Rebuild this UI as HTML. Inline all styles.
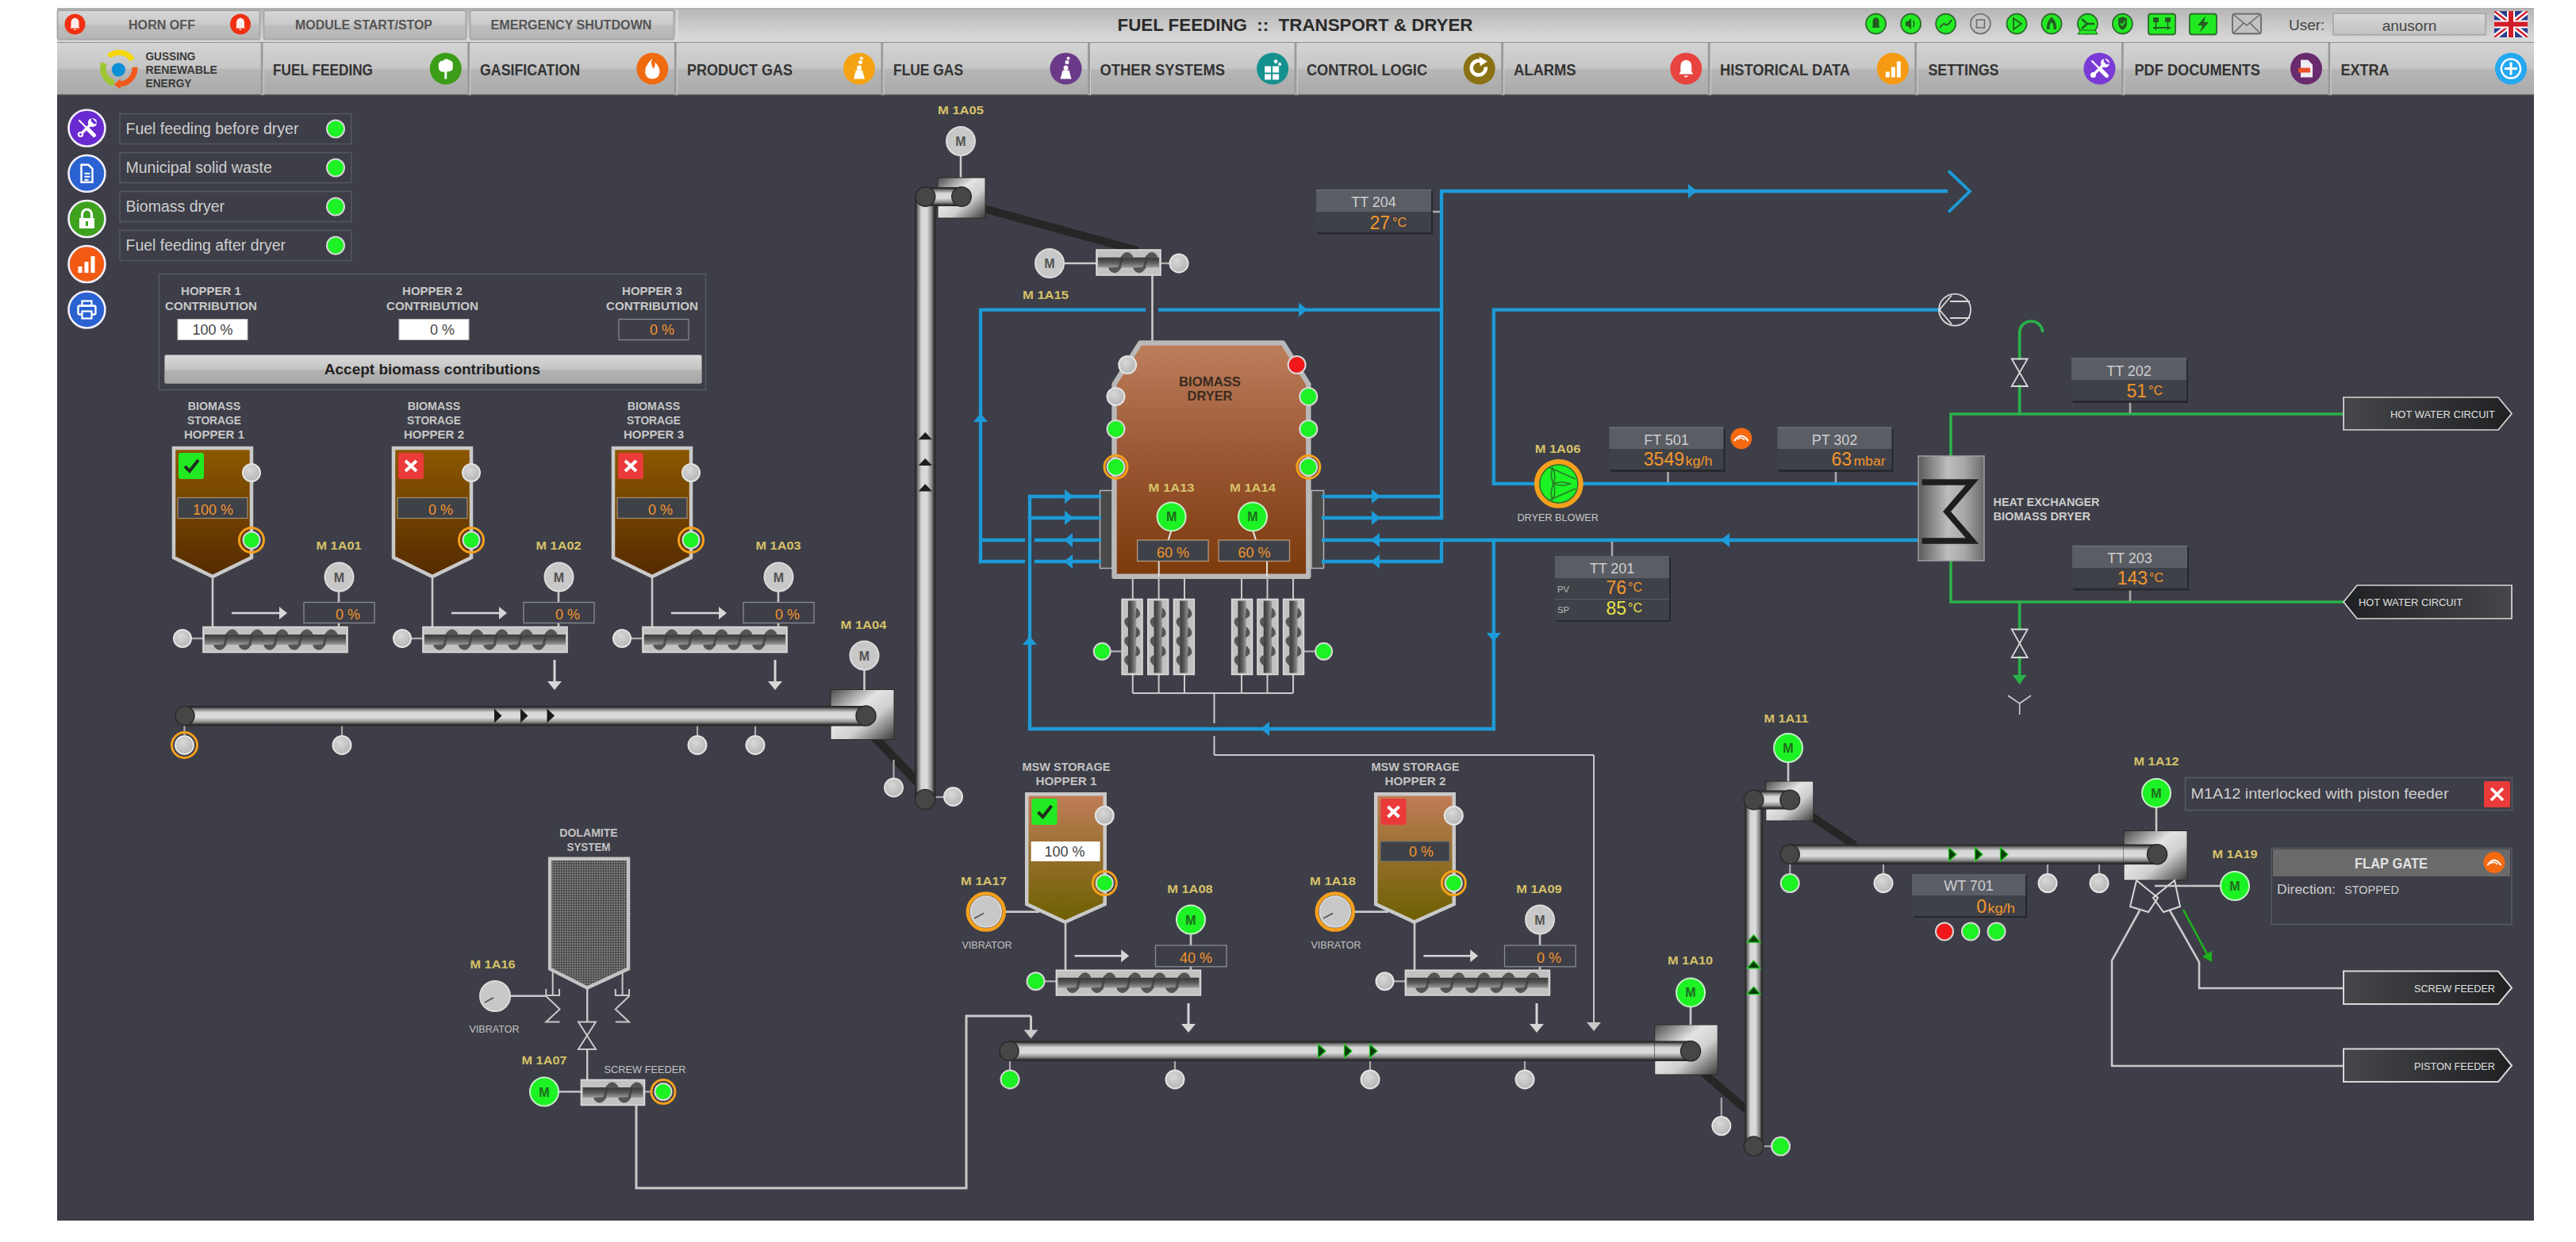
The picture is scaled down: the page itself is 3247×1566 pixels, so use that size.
<!DOCTYPE html>
<html><head><meta charset="utf-8"><style>
html,body{margin:0;padding:0;background:#fff;width:3247px;height:1566px;overflow:hidden}
svg{display:block;font-family:"Liberation Sans", sans-serif}
#wrap{}
</style></head><body><div id="wrap">
<svg width="3247" height="1566" viewBox="0 0 3247 1566">
<defs>
<linearGradient id="topbar" x1="0" y1="0" x2="0" y2="1">
 <stop offset="0" stop-color="#d9d9d9"/><stop offset="0.5" stop-color="#cdcdcd"/><stop offset="1" stop-color="#c2c2c2"/>
</linearGradient>
<linearGradient id="topbar2" x1="0" y1="0" x2="0" y2="1">
 <stop offset="0" stop-color="#b6b6b6"/><stop offset="0.85" stop-color="#d6d6d6"/><stop offset="1" stop-color="#d8d8d8"/>
</linearGradient>
<linearGradient id="btnface" x1="0" y1="0" x2="0" y2="1">
 <stop offset="0" stop-color="#d6d6d6"/><stop offset="0.45" stop-color="#cbcbcb"/><stop offset="0.55" stop-color="#bdbdbd"/><stop offset="1" stop-color="#b6b6b6"/>
</linearGradient>
<linearGradient id="navbar" x1="0" y1="0" x2="0" y2="1">
 <stop offset="0" stop-color="#d4d4d4"/><stop offset="0.48" stop-color="#c6c6c6"/><stop offset="0.52" stop-color="#b6b6b6"/><stop offset="1" stop-color="#a9a9a9"/>
</linearGradient>
<radialGradient id="gdot" cx="0.4" cy="0.35" r="0.7">
 <stop offset="0" stop-color="#d8d8d8"/><stop offset="1" stop-color="#b4b4b4"/>
</radialGradient>
</defs>

<rect x="72" y="10" width="3122" height="1529" fill="#3d3e47" stroke="none" stroke-width="1" />
<rect x="72" y="10" width="3122" height="44" fill="url(#topbar2)" stroke="none" stroke-width="1" />
<rect x="72" y="10" width="3122" height="1.5" fill="#b0b0b0" stroke="none" stroke-width="1" />
<rect x="72" y="53" width="3122" height="2" fill="#8e8e8e" stroke="none" stroke-width="1" />
<rect x="72" y="54" width="3122" height="66" fill="url(#navbar)" stroke="none" stroke-width="1" />
<rect x="72" y="119" width="3122" height="1.5" fill="#55565c" stroke="none" stroke-width="1" />
<rect x="72.5" y="13" width="255" height="36.5" fill="url(#btnface)" stroke="#a6a6a6" stroke-width="1.8" rx="2"/>
<rect x="332.5" y="13" width="255" height="36.5" fill="url(#btnface)" stroke="#a6a6a6" stroke-width="1.8" rx="2"/>
<rect x="592.5" y="13" width="257" height="36.5" fill="url(#btnface)" stroke="#a6a6a6" stroke-width="1.8" rx="2"/>
<line x1="853.5" y1="12" x2="853.5" y2="50" stroke="#dcdcdc" stroke-width="2" />
<text x="162" y="36.5" font-size="16" fill="#555" text-anchor="start" font-weight="bold"  textLength="84" lengthAdjust="spacingAndGlyphs">HORN OFF</text>
<text x="372" y="36.5" font-size="16" fill="#555" text-anchor="start" font-weight="bold"  textLength="173" lengthAdjust="spacingAndGlyphs">MODULE START/STOP</text>
<text x="618.5" y="36.5" font-size="16" fill="#555" text-anchor="start" font-weight="bold"  textLength="203" lengthAdjust="spacingAndGlyphs">EMERGENCY SHUTDOWN</text>
<circle cx="94.5" cy="30.5" r="13" fill="#f03010"/>
<path transform="translate(94.5,30.5) scale(1.0)" d="M-6,5 L-5,3 L-5,-2 Q-5,-7 0,-8 Q5,-7 5,-2 L5,3 L6,5 Z M-2,6 Q0,9 2,6 Z" fill="#fff" opacity="0.92"/>
<circle cx="303" cy="30.5" r="13" fill="#f03010"/>
<path transform="translate(303,30.5) scale(1.0)" d="M-6,5 L-5,3 L-5,-2 Q-5,-7 0,-8 Q5,-7 5,-2 L5,3 L6,5 Z M-2,6 Q0,9 2,6 Z" fill="#fff" opacity="0.92"/>
<text x="1408.5" y="39" font-size="21.5" fill="#2a2a2a" text-anchor="start" font-weight="bold"  textLength="448" lengthAdjust="spacingAndGlyphs">FUEL FEEDING&#160;&#160;::&#160;&#160;TRANSPORT &amp; DRYER</text>
<circle cx="2364.5" cy="30" r="12.5" fill="#22ea22" stroke="#2d6a2d" stroke-width="1.8"/>
<circle cx="2408.6" cy="30" r="12.5" fill="#22ea22" stroke="#2d6a2d" stroke-width="1.8"/>
<circle cx="2452.6" cy="30" r="12.5" fill="#22ea22" stroke="#2d6a2d" stroke-width="1.8"/>
<circle cx="2496.4" cy="30" r="12.5" fill="#c4c4c4" stroke="#6a6a6a" stroke-width="1.6"/>
<rect x="2491.4" y="25" width="10" height="10" fill="none" stroke="#6a6a6a" stroke-width="1.5" />
<circle cx="2542" cy="30" r="12.5" fill="#22ea22" stroke="#2d6a2d" stroke-width="1.8"/>
<circle cx="2586" cy="30" r="12.5" fill="#22ea22" stroke="#2d6a2d" stroke-width="1.8"/>
<circle cx="2631.4" cy="30" r="12.5" fill="#22ea22" stroke="#2d6a2d" stroke-width="1.8"/>
<circle cx="2675.4" cy="30" r="12.5" fill="#22ea22" stroke="#2d6a2d" stroke-width="1.8"/>
<path d="M2359.5,35 L2360.5,33 L2360.5,27 Q2360.5,22.5 2364.5,22 Q2368.5,22.5 2368.5,27 L2368.5,33 L2369.5,35 Z" fill="#245c24"/>
<path d="M2402,27 L2405,27 L2409,23 L2409,37 L2405,33 L2402,33 Z" fill="#245c24"/><path d="M2411.5,26 Q2414,30 2411.5,34" stroke="#245c24" stroke-width="1.5" fill="none"/>
<path d="M2445,35 Q2450,28 2452,31 Q2455,33 2460,25" stroke="#245c24" stroke-width="2" fill="none"/>
<path d="M2538,23 L2548,30 L2538,37 Z" stroke="#245c24" stroke-width="1.8" fill="none"/>
<path d="M2580,37 Q2579,28 2586,21 Q2593,28 2592,37 L2588.5,37 Q2589,31 2586,28 Q2583,31 2583.5,37 Z" fill="#245c24"/>
<path d="M2631,30 L2624,24 M2631,30 L2624,36 M2631,30 L2640,30" stroke="#245c24" stroke-width="2.5"/><path d="M2619,43 L2622,38 L2641,38 L2644,43 Z" fill="#22ea22" stroke="#245c24" stroke-width="1"/>
<path d="M2670,23 L2675.4,21 L2681,23 L2681,30 Q2680,36 2675.4,38 Q2671,36 2670,30 Z" fill="#245c24"/><path d="M2672.5,29.5 L2675,32 L2679,26.5" stroke="#22ea22" stroke-width="1.6" fill="none"/>
<rect x="2708" y="17.5" width="34" height="26" fill="#22ea22" stroke="#2d6a2d" stroke-width="1.8" rx="3"/>
<rect x="2714" y="22" width="7" height="6" fill="#245c24" stroke="none" stroke-width="1" />
<rect x="2729" y="22" width="7" height="6" fill="#245c24" stroke="none" stroke-width="1" />
<line x1="2714" y1="35" x2="2736" y2="35" stroke="#245c24" stroke-width="2" />
<line x1="2717.5" y1="28" x2="2717.5" y2="38" stroke="#245c24" stroke-width="1.5" />
<line x1="2732.5" y1="28" x2="2732.5" y2="38" stroke="#245c24" stroke-width="1.5" />
<rect x="2760" y="17.5" width="34" height="26" fill="#22ea22" stroke="#2d6a2d" stroke-width="1.8" rx="3"/>
<path d="M2780,20 L2770,32 L2776,32 L2773,41 L2784,28 L2778,28 Z" fill="#245c24"/>
<rect x="2814" y="17.5" width="36" height="25" fill="#c2c2c2" stroke="#6a6a6a" stroke-width="1.8" rx="3"/>
<path d="M2816,19 L2832,32 L2848,19 M2816,41 L2828,29 M2848,41 L2836,29" stroke="#6a6a6a" stroke-width="1.6" fill="none"/>
<text x="2885" y="38" font-size="19" fill="#444" text-anchor="start" font-weight="normal" >User:</text>
<rect x="2941" y="17" width="192" height="27" fill="url(#topbar)" stroke="#9a9a9a" stroke-width="1.2" />
<text x="3037" y="39" font-size="19" fill="#444" text-anchor="middle" font-weight="normal" >anusorn</text>
<clipPath id="flagclip"><rect x="3144" y="14" width="42" height="33"/></clipPath>
<g clip-path="url(#flagclip)"><g transform="translate(3144,14)">
<rect width="42" height="33" fill="#2a3c8c"/>
<path d="M0,0 L42,33 M42,0 L0,33" stroke="#fff" stroke-width="7"/>
<path d="M0,0 L42,33 M42,0 L0,33" stroke="#d21c28" stroke-width="2.5"/>
<path d="M21,0 V33 M0,16.5 H42" stroke="#fff" stroke-width="10"/>
<path d="M21,0 V33 M0,16.5 H42" stroke="#d21c28" stroke-width="6"/>
</g></g>
<line x1="330.2" y1="54" x2="330.2" y2="120" stroke="#9a9a9a" stroke-width="3" />
<line x1="332.2" y1="54" x2="332.2" y2="120" stroke="#d2d2d2" stroke-width="1" />
<line x1="590.78" y1="54" x2="590.78" y2="120" stroke="#9a9a9a" stroke-width="3" />
<line x1="592.78" y1="54" x2="592.78" y2="120" stroke="#d2d2d2" stroke-width="1" />
<line x1="851.3599999999999" y1="54" x2="851.3599999999999" y2="120" stroke="#9a9a9a" stroke-width="3" />
<line x1="853.3599999999999" y1="54" x2="853.3599999999999" y2="120" stroke="#d2d2d2" stroke-width="1" />
<line x1="1111.94" y1="54" x2="1111.94" y2="120" stroke="#9a9a9a" stroke-width="3" />
<line x1="1113.94" y1="54" x2="1113.94" y2="120" stroke="#d2d2d2" stroke-width="1" />
<line x1="1372.52" y1="54" x2="1372.52" y2="120" stroke="#9a9a9a" stroke-width="3" />
<line x1="1374.52" y1="54" x2="1374.52" y2="120" stroke="#d2d2d2" stroke-width="1" />
<line x1="1633.1" y1="54" x2="1633.1" y2="120" stroke="#9a9a9a" stroke-width="3" />
<line x1="1635.1" y1="54" x2="1635.1" y2="120" stroke="#d2d2d2" stroke-width="1" />
<line x1="1893.68" y1="54" x2="1893.68" y2="120" stroke="#9a9a9a" stroke-width="3" />
<line x1="1895.68" y1="54" x2="1895.68" y2="120" stroke="#d2d2d2" stroke-width="1" />
<line x1="2154.2599999999998" y1="54" x2="2154.2599999999998" y2="120" stroke="#9a9a9a" stroke-width="3" />
<line x1="2156.2599999999998" y1="54" x2="2156.2599999999998" y2="120" stroke="#d2d2d2" stroke-width="1" />
<line x1="2414.8399999999997" y1="54" x2="2414.8399999999997" y2="120" stroke="#9a9a9a" stroke-width="3" />
<line x1="2416.8399999999997" y1="54" x2="2416.8399999999997" y2="120" stroke="#d2d2d2" stroke-width="1" />
<line x1="2675.4199999999996" y1="54" x2="2675.4199999999996" y2="120" stroke="#9a9a9a" stroke-width="3" />
<line x1="2677.4199999999996" y1="54" x2="2677.4199999999996" y2="120" stroke="#d2d2d2" stroke-width="1" />
<line x1="2935.9999999999995" y1="54" x2="2935.9999999999995" y2="120" stroke="#9a9a9a" stroke-width="3" />
<line x1="2937.9999999999995" y1="54" x2="2937.9999999999995" y2="120" stroke="#d2d2d2" stroke-width="1" />
<text x="344" y="94.5" font-size="19.5" fill="#333" text-anchor="start" font-weight="bold"  textLength="126" lengthAdjust="spacingAndGlyphs">FUEL FEEDING</text>
<circle cx="561.78" cy="86.5" r="20" fill="#3c9e18"/>
<text x="605" y="94.5" font-size="19.5" fill="#333" text-anchor="start" font-weight="bold"  textLength="126" lengthAdjust="spacingAndGlyphs">GASIFICATION</text>
<circle cx="822.3599999999999" cy="86.5" r="20" fill="#f06a10"/>
<text x="866" y="94.5" font-size="19.5" fill="#333" text-anchor="start" font-weight="bold"  textLength="133" lengthAdjust="spacingAndGlyphs">PRODUCT GAS</text>
<circle cx="1082.94" cy="86.5" r="20" fill="#f5a312"/>
<text x="1126" y="94.5" font-size="19.5" fill="#333" text-anchor="start" font-weight="bold"  textLength="88" lengthAdjust="spacingAndGlyphs">FLUE GAS</text>
<circle cx="1343.52" cy="86.5" r="20" fill="#6a3a88"/>
<text x="1386.5" y="94.5" font-size="19.5" fill="#333" text-anchor="start" font-weight="bold"  textLength="157.5" lengthAdjust="spacingAndGlyphs">OTHER SYSTEMS</text>
<circle cx="1604.1" cy="86.5" r="20" fill="#14918e"/>
<text x="1647" y="94.5" font-size="19.5" fill="#333" text-anchor="start" font-weight="bold"  textLength="152" lengthAdjust="spacingAndGlyphs">CONTROL LOGIC</text>
<circle cx="1864.68" cy="86.5" r="20" fill="#8a7212"/>
<text x="1908" y="94.5" font-size="19.5" fill="#333" text-anchor="start" font-weight="bold"  textLength="78.5" lengthAdjust="spacingAndGlyphs">ALARMS</text>
<circle cx="2125.2599999999998" cy="86.5" r="20" fill="#e8433f"/>
<text x="2168" y="94.5" font-size="19.5" fill="#333" text-anchor="start" font-weight="bold"  textLength="164" lengthAdjust="spacingAndGlyphs">HISTORICAL DATA</text>
<circle cx="2385.8399999999997" cy="86.5" r="20" fill="#f59a12"/>
<text x="2430.5" y="94.5" font-size="19.5" fill="#333" text-anchor="start" font-weight="bold"  textLength="89" lengthAdjust="spacingAndGlyphs">SETTINGS</text>
<circle cx="2646.4199999999996" cy="86.5" r="20" fill="#7a3ad6"/>
<text x="2690.5" y="94.5" font-size="19.5" fill="#333" text-anchor="start" font-weight="bold"  textLength="158.5" lengthAdjust="spacingAndGlyphs">PDF DOCUMENTS</text>
<circle cx="2906.9999999999995" cy="86.5" r="20" fill="#6a2a6e"/>
<text x="2950.5" y="94.5" font-size="19.5" fill="#333" text-anchor="start" font-weight="bold"  textLength="61" lengthAdjust="spacingAndGlyphs">EXTRA</text>
<circle cx="3165" cy="86.5" r="20" fill="#24a8f0"/>
<g transform="translate(561.78,86.5)"><path d="M-1.5,13 L-1.5,4 Q-9,5 -9,-2 Q-10,-10 -3,-10 Q0,-14 4,-11 Q10,-10 9,-3 Q10,4 1.5,4 L1.5,13 Z" fill="#fff"/></g>
<g transform="translate(822.3599999999999,86.5)"><path d="M0,-13 Q-11,-2 -9,6 Q-7,13 0,13 Q7,13 9,6 Q10,-2 3,-8 Q4,-2 1,0 Q-3,-7 0,-13 Z M0,3 Q-4,7 -3,10 Q0,12 3,10 Q4,7 0,3 Z" fill="#fff"/></g>
<g transform="translate(1082.94,86.5)"><path d="M-7,13 L-4,2 L4,2 L7,13 Z M-3,-1 A3,3 0 1 1 3,-1 A3,3 0 1 1 -3,-1 M-1,-8 A2.5,2.5 0 1 1 4,-8 A2.5,2.5 0 1 1 -1,-8 M1,-13 A2,2 0 1 1 5,-13 A2,2 0 1 1 1,-13" fill="#fff"/></g>
<g transform="translate(1343.52,86.5)"><path d="M-7,13 L-4,2 L4,2 L7,13 Z M-3,-1 A3,3 0 1 1 3,-1 A3,3 0 1 1 -3,-1 M-1,-8 A2.5,2.5 0 1 1 4,-8 A2.5,2.5 0 1 1 -1,-8 M1,-13 A2,2 0 1 1 5,-13 A2,2 0 1 1 1,-13" fill="#fff"/></g>
<g transform="translate(1604.1,86.5)"><path d="M-10,-3 h8 v8 h-8 Z M0,-3 h8 v8 h-8 Z M-10,7 h8 v7 h-8 Z M0,7 h8 v7 h-8 Z M4,-12 l3,3 l-3,3 l-3,-3 Z M9,-8 l2.5,2.5 l-2.5,2.5 l-2.5,-2.5 Z" fill="#fff"/></g>
<g transform="translate(1864.68,86.5)"><path d="M8,-2 A9,9 0 1 1 3,-9" fill="none" stroke="#fff" stroke-width="4.5"/></g>
<g transform="translate(1864.68,86.5)"><path d="M0,-15 L10,-9 L1,-3 Z" fill="#fff"/></g>
<g transform="translate(2125.2599999999998,86.5)"><path d="M-9,7 L-7,4 L-7,-3 Q-7,-10 0,-11 Q7,-10 7,-3 L7,4 L9,7 Z M-3,9 Q0,13 3,9 Z" fill="#fff"/></g>
<g transform="translate(2385.8399999999997,86.5)"><path d="M-9,4 h5 v7 h-5 Z M-2,-2 h5 v13 h-5 Z M5,-9 h5 v20 h-5 Z" fill="#fff"/></g>
<g transform="translate(2646.4199999999996,86.5)"><path d="M-10,-10 L1,1" stroke="#fff" stroke-width="2.2" fill="none"/></g>
<g transform="translate(2646.4199999999996,86.5)"><path d="M2,2 L9,9" stroke="#fff" stroke-width="5" fill="none" stroke-linecap="round"/></g>
<g transform="translate(2646.4199999999996,86.5)"><path d="M-8,8 L5,-5" stroke="#fff" stroke-width="3.2" fill="none"/></g>
<g transform="translate(2646.4199999999996,86.5)"><path d="M-8,8 m-3.5,0 a3.5,3.5 0 1 0 7,0 a3.5,3.5 0 1 0 -7,0 M7,-7 m-5.5,0 a5.5,5.5 0 1 0 11,0 a5.5,5.5 0 1 0 -11,0" fill="#fff"/></g>
<g transform="translate(2646.4199999999996,86.5)"><path d="M6,-13 L13,-6 L9,-5 L5,-9 Z" fill="#7a3ad6"/></g>
<g transform="translate(2906.9999999999995,86.5)"><path d="M-7,-11 h9 l6,6 v16 h-15 Z" fill="#f0ecf4"/></g>
<g transform="translate(2906.9999999999995,86.5)"><path d="M-10,-1 h15 v6 h-15 Z" fill="#e8502a"/></g>
<g transform="translate(3165,86.5)"><path d="M0,-8 V8 M-8,0 H8" stroke="#fff" stroke-width="3" fill="none"/></g>
<g transform="translate(3165,86.5)"><path d="M0,-12 A12,12 0 1 1 -0.1,-12 Z" fill="none" stroke="#fff" stroke-width="2.5"/></g>
<g>
<path d="M137.0,70.9 A20.0,20.0 0 0 1 166.9,75.6" stroke="#f5d80c" stroke-width="7" fill="none"/>
<path d="M131.1,79.4 A20.0,20.0 0 0 0 143.7,105.2" stroke="#9cc632" stroke-width="7.5" fill="none"/>
<path d="M169.9,84.8 A20.0,20.0 0 0 1 152.0,106.1" stroke="#f2581a" stroke-width="7" fill="none"/>
<path d="M151.9,99.2 L143.9,106.7 L151.9,112.2 Z" fill="#f2581a"/>
<circle cx="149.4" cy="87.9" r="8.6" fill="#0c90d6"/>
</g>
<text x="183.5" y="75.5" font-size="15" fill="#3a3a3a" text-anchor="start" font-weight="bold"  textLength="63" lengthAdjust="spacingAndGlyphs">GUSSING</text>
<text x="183.5" y="92.5" font-size="15" fill="#3a3a3a" text-anchor="start" font-weight="bold"  textLength="90.5" lengthAdjust="spacingAndGlyphs">RENEWABLE</text>
<text x="183.5" y="109.5" font-size="15" fill="#3a3a3a" text-anchor="start" font-weight="bold"  textLength="58" lengthAdjust="spacingAndGlyphs">ENERGY</text>
<circle cx="109.5" cy="161.5" r="23" fill="#6a2ad2" stroke="#f2eefa" stroke-width="2.6"/>
<circle cx="109.5" cy="218.8" r="23" fill="#2a62d2" stroke="#f2eefa" stroke-width="2.6"/>
<circle cx="109.5" cy="276" r="23" fill="#3ea21e" stroke="#f2eefa" stroke-width="2.6"/>
<circle cx="109.5" cy="333" r="23" fill="#f25a14" stroke="#f2eefa" stroke-width="2.6"/>
<circle cx="109.5" cy="390.5" r="23" fill="#2a62d2" stroke="#f2eefa" stroke-width="2.6"/>
<g transform="translate(109.5,161.5)"><path d="M-10,-10 L1,1" stroke="#fff" stroke-width="2.2"/><path d="M2,2 L9,9" stroke="#fff" stroke-width="5" stroke-linecap="round"/><path d="M-8,8 L5,-5" stroke="#fff" stroke-width="3.2"/><circle cx="-8" cy="8" r="3.6" fill="#fff"/><circle cx="-8" cy="8" r="1.4" fill="#6a2ad2"/><circle cx="7" cy="-7" r="5.6" fill="#fff"/><path d="M6,-13 L13,-6 L9,-5 L5,-9 Z" fill="#6a2ad2"/></g>
<g transform="translate(109.5,218.8)"><path d="M-7,-11 h9 l5,5 v17 h-14 Z" fill="none" stroke="#fff" stroke-width="2.4"/><path d="M-3,0 h7 M-3,4 h7 M-3,8 h5" stroke="#fff" stroke-width="2"/></g>
<g transform="translate(109.5,276)"><path d="M-6,-1 v-5 a6,6 0 0 1 12,0 v5" fill="none" stroke="#fff" stroke-width="3.2"/><rect x="-9.5" y="-1" width="19" height="13" fill="#fff"/><rect x="-1.5" y="3" width="3" height="6" fill="#3ea21e"/></g>
<g transform="translate(109.5,333)"><rect x="-11" y="3" width="5" height="8" fill="#fff"/><rect x="-3" y="-3" width="5" height="14" fill="#fff"/><rect x="5" y="-10" width="5" height="21" fill="#fff"/></g>
<g transform="translate(109.5,390.5)"><rect x="-6" y="-11" width="12" height="6" fill="none" stroke="#fff" stroke-width="2.2"/><rect x="-11" y="-5" width="22" height="11" rx="2" fill="none" stroke="#fff" stroke-width="2.4"/><rect x="-6" y="2" width="12" height="9" fill="#2a62d2" stroke="#fff" stroke-width="2.2"/></g>
<rect x="151" y="143.5" width="292" height="38" fill="none" stroke="#575962" stroke-width="1.5" />
<text x="158.5" y="169" font-size="19.5" fill="#cfcfcf" text-anchor="start" font-weight="normal" >Fuel feeding before dryer</text>
<circle cx="423" cy="162.5" r="11" fill="#1cf224" stroke="#d8d8d8" stroke-width="2"/>
<rect x="151" y="192.5" width="292" height="38" fill="none" stroke="#575962" stroke-width="1.5" />
<text x="158.5" y="218" font-size="19.5" fill="#cfcfcf" text-anchor="start" font-weight="normal" >Municipal solid waste</text>
<circle cx="423" cy="211.5" r="11" fill="#1cf224" stroke="#d8d8d8" stroke-width="2"/>
<rect x="151" y="241.5" width="292" height="38" fill="none" stroke="#575962" stroke-width="1.5" />
<text x="158.5" y="267" font-size="19.5" fill="#cfcfcf" text-anchor="start" font-weight="normal" >Biomass dryer</text>
<circle cx="423" cy="260.5" r="11" fill="#1cf224" stroke="#d8d8d8" stroke-width="2"/>
<rect x="151" y="290.5" width="292" height="38" fill="none" stroke="#575962" stroke-width="1.5" />
<text x="158.5" y="316" font-size="19.5" fill="#cfcfcf" text-anchor="start" font-weight="normal" >Fuel feeding after dryer</text>
<circle cx="423" cy="309.5" r="11" fill="#1cf224" stroke="#d8d8d8" stroke-width="2"/>
<rect x="200.5" y="345.5" width="689" height="146" fill="none" stroke="#575962" stroke-width="1.5" />
<text x="266" y="372" font-size="15" fill="#c8c8c8" text-anchor="middle" font-weight="bold" >HOPPER 1</text>
<text x="266" y="390.5" font-size="15" fill="#c8c8c8" text-anchor="middle" font-weight="bold"  textLength="116" lengthAdjust="spacingAndGlyphs">CONTRIBUTION</text>
<rect x="224" y="402.5" width="88" height="26" fill="#fff" stroke="#bbb" stroke-width="1" />
<text x="268" y="422" font-size="18" fill="#444" text-anchor="middle" font-weight="normal" >100 %</text>
<text x="545" y="372" font-size="15" fill="#c8c8c8" text-anchor="middle" font-weight="bold" >HOPPER 2</text>
<text x="545" y="390.5" font-size="15" fill="#c8c8c8" text-anchor="middle" font-weight="bold"  textLength="116" lengthAdjust="spacingAndGlyphs">CONTRIBUTION</text>
<rect x="503" y="402.5" width="88" height="26" fill="#fff" stroke="#bbb" stroke-width="1" />
<text x="573" y="422" font-size="18" fill="#444" text-anchor="end" font-weight="normal" >0 %</text>
<text x="822" y="372" font-size="15" fill="#c8c8c8" text-anchor="middle" font-weight="bold" >HOPPER 3</text>
<text x="822" y="390.5" font-size="15" fill="#c8c8c8" text-anchor="middle" font-weight="bold"  textLength="116" lengthAdjust="spacingAndGlyphs">CONTRIBUTION</text>
<rect x="780" y="402.5" width="88" height="26" fill="none" stroke="#8a8c94" stroke-width="1.2" />
<text x="850" y="422" font-size="18" fill="#f3962c" text-anchor="end" font-weight="normal" >0 %</text>
<defs><linearGradient id="btn" x1="0" y1="0" x2="0" y2="1">
<stop offset="0" stop-color="#d8d8d8"/><stop offset="0.5" stop-color="#c4c4c4"/><stop offset="0.55" stop-color="#b2b2b2"/><stop offset="1" stop-color="#a6a6a6"/></linearGradient></defs>
<rect x="207.5" y="447.5" width="677" height="36" fill="url(#btn)" stroke="#8d8d8d" stroke-width="1" rx="2"/>
<text x="545" y="472" font-size="19" fill="#222" text-anchor="middle" font-weight="bold" >Accept biomass contributions</text>
<defs>
<linearGradient id="hopBrown" x1="0" y1="0" x2="0" y2="1"><stop offset="0" stop-color="#8c5800"/><stop offset="1" stop-color="#552b00"/></linearGradient>
<linearGradient id="beltH" x1="0" y1="0" x2="0" y2="1">
<stop offset="0" stop-color="#262626"/><stop offset="0.07" stop-color="#303030"/><stop offset="0.13" stop-color="#6c6c6c"/><stop offset="0.32" stop-color="#d6d6d6"/><stop offset="0.58" stop-color="#dcdcdc"/><stop offset="0.8" stop-color="#8c8c8c"/><stop offset="0.92" stop-color="#333"/><stop offset="1" stop-color="#262626"/></linearGradient>
<linearGradient id="beltV" x1="0" y1="0" x2="1" y2="0">
<stop offset="0" stop-color="#262626"/><stop offset="0.07" stop-color="#303030"/><stop offset="0.13" stop-color="#6c6c6c"/><stop offset="0.32" stop-color="#d6d6d6"/><stop offset="0.58" stop-color="#dcdcdc"/><stop offset="0.8" stop-color="#8c8c8c"/><stop offset="0.92" stop-color="#333"/><stop offset="1" stop-color="#262626"/></linearGradient>
<linearGradient id="dbox" x1="0" y1="0" x2="1" y2="1">
<stop offset="0" stop-color="#4a4a4a"/><stop offset="0.4" stop-color="#e4e4e4"/><stop offset="0.62" stop-color="#cfcfcf"/><stop offset="1" stop-color="#3a3a3a"/></linearGradient>
<linearGradient id="shaftH" x1="0" y1="0" x2="0" y2="1"><stop offset="0" stop-color="#383838"/><stop offset="0.5" stop-color="#5a5a5a"/><stop offset="1" stop-color="#9a9a9a"/></linearGradient>
<linearGradient id="shaftV" x1="0" y1="0" x2="1" y2="0"><stop offset="0" stop-color="#383838"/><stop offset="0.5" stop-color="#5a5a5a"/><stop offset="1" stop-color="#9a9a9a"/></linearGradient>
</defs>
<text x="270" y="516.5" font-size="15" fill="#c6c6c6" text-anchor="middle" font-weight="bold"  textLength="66.5" lengthAdjust="spacingAndGlyphs">BIOMASS</text>
<text x="270" y="534.5" font-size="15" fill="#c6c6c6" text-anchor="middle" font-weight="bold"  textLength="68" lengthAdjust="spacingAndGlyphs">STORAGE</text>
<text x="270" y="552.5" font-size="15" fill="#c6c6c6" text-anchor="middle" font-weight="bold"  textLength="76" lengthAdjust="spacingAndGlyphs">HOPPER 1</text>
<line x1="268" y1="727" x2="268" y2="791" stroke="#c9c9c9" stroke-width="2.6" />
<path d="M219,565 L317,565 L317,703 L268.0,727 L219,703 Z" fill="url(#hopBrown)" stroke="#c9c9c9" stroke-width="4.5"/>
<rect x="225" y="571" width="32" height="33" fill="#22ea22" stroke="none" stroke-width="0" rx="3"/>
<path d="M233,588 L239,594 L250,580" stroke="#1e2e1e" stroke-width="4" fill="none"/>
<circle cx="317" cy="596" r="11" fill="url(#gdot)" stroke="#e4e4e4" stroke-width="2"/>
<rect x="224" y="627.5" width="88" height="26" fill="#3f4148" stroke="#a08a6a" stroke-width="1.3" />
<text x="294" y="648.5" font-size="18" fill="#f3962c" text-anchor="end" font-weight="normal" >100 %</text>
<circle cx="317" cy="681" r="15.5" fill="none" stroke="#f5a01c" stroke-width="3"/>
<circle cx="317" cy="681" r="10.5" fill="#1cf224" stroke="#d8d8d8" stroke-width="2"/>
<line x1="230" y1="805" x2="257" y2="805" stroke="#aaa" stroke-width="2.4" />
<circle cx="230" cy="805" r="11" fill="url(#gdot)" stroke="#e4e4e4" stroke-width="2"/>
<rect x="256" y="790.5" width="182" height="32" fill="#c2c2c2" stroke="#dcdcdc" stroke-width="1.6" />
<rect x="258" y="800.1" width="178" height="12.799999999999955" fill="url(#shaftH)"/>
<path d="M283.5,801.1 Q288.5,792.5 293.5,793.5 Q298.5,794.5 300.5,800.1 Z" fill="#555"/>
<path d="M286,811.9 Q281,820.5 276,819.5 Q271,818.5 269,812.9 Z" fill="#555"/>
<path d="M283,812.9 L286.5,800.1" stroke="#3a3a3a" stroke-width="3" opacity="0.7"/>
<path d="M315.0,801.1 Q320.0,792.5 325.0,793.5 Q330.0,794.5 332.0,800.1 Z" fill="#555"/>
<path d="M317.5,811.9 Q312.5,820.5 307.5,819.5 Q302.5,818.5 300.5,812.9 Z" fill="#555"/>
<path d="M314.5,812.9 L318.0,800.1" stroke="#3a3a3a" stroke-width="3" opacity="0.7"/>
<path d="M346.5,801.1 Q351.5,792.5 356.5,793.5 Q361.5,794.5 363.5,800.1 Z" fill="#555"/>
<path d="M349,811.9 Q344,820.5 339,819.5 Q334,818.5 332,812.9 Z" fill="#555"/>
<path d="M346,812.9 L349.5,800.1" stroke="#3a3a3a" stroke-width="3" opacity="0.7"/>
<path d="M377.5,801.1 Q382.5,792.5 387.5,793.5 Q392.5,794.5 394.5,800.1 Z" fill="#555"/>
<path d="M380,811.9 Q375,820.5 370,819.5 Q365,818.5 363,812.9 Z" fill="#555"/>
<path d="M377,812.9 L380.5,800.1" stroke="#3a3a3a" stroke-width="3" opacity="0.7"/>
<path d="M408.5,801.1 Q413.5,792.5 418.5,793.5 Q423.5,794.5 425.5,800.1 Z" fill="#555"/>
<path d="M411,811.9 Q406,820.5 401,819.5 Q396,818.5 394,812.9 Z" fill="#555"/>
<path d="M408,812.9 L411.5,800.1" stroke="#3a3a3a" stroke-width="3" opacity="0.7"/>
<line x1="292" y1="773" x2="354" y2="773" stroke="#d6d6d6" stroke-width="2.6" />
<path d="M352,765 L362,773 L352,781 Z" fill="#d6d6d6"/>
<text x="427" y="693" font-size="14.5" fill="#d6c26a" text-anchor="middle" font-weight="bold"  textLength="57" lengthAdjust="spacingAndGlyphs">M 1A01</text>
<line x1="427" y1="746" x2="427" y2="760" stroke="#c9c9c9" stroke-width="2.6" />
<line x1="427" y1="786" x2="427" y2="791" stroke="#c9c9c9" stroke-width="2.6" />
<circle cx="427.5" cy="727.5" r="18" fill="#c8c8c8" stroke="#dcdcdc" stroke-width="2"/>
<text x="427.5" y="733.5" font-size="16" fill="#525252" text-anchor="middle" font-weight="bold" >M</text>
<rect x="383" y="759.5" width="89" height="26" fill="none" stroke="#8a8c94" stroke-width="1.3" />
<text x="454" y="780.5" font-size="18" fill="#f3962c" text-anchor="end" font-weight="normal" >0 %</text>
<text x="547" y="516.5" font-size="15" fill="#c6c6c6" text-anchor="middle" font-weight="bold"  textLength="66.5" lengthAdjust="spacingAndGlyphs">BIOMASS</text>
<text x="547" y="534.5" font-size="15" fill="#c6c6c6" text-anchor="middle" font-weight="bold"  textLength="68" lengthAdjust="spacingAndGlyphs">STORAGE</text>
<text x="547" y="552.5" font-size="15" fill="#c6c6c6" text-anchor="middle" font-weight="bold"  textLength="76" lengthAdjust="spacingAndGlyphs">HOPPER 2</text>
<line x1="545" y1="727" x2="545" y2="791" stroke="#c9c9c9" stroke-width="2.6" />
<path d="M496,565 L594,565 L594,703 L545.0,727 L496,703 Z" fill="url(#hopBrown)" stroke="#c9c9c9" stroke-width="4.5"/>
<rect x="502" y="571" width="32" height="33" fill="#ea3a3a" stroke="none" stroke-width="0" rx="3"/>
<path d="M511,581 L525,594 M525,581 L511,594" stroke="#fff" stroke-width="4" fill="none"/>
<circle cx="594" cy="596" r="11" fill="url(#gdot)" stroke="#e4e4e4" stroke-width="2"/>
<rect x="501" y="627.5" width="88" height="26" fill="#3f4148" stroke="#a08a6a" stroke-width="1.3" />
<text x="571" y="648.5" font-size="18" fill="#f3962c" text-anchor="end" font-weight="normal" >0 %</text>
<circle cx="594" cy="681" r="15.5" fill="none" stroke="#f5a01c" stroke-width="3"/>
<circle cx="594" cy="681" r="10.5" fill="#1cf224" stroke="#d8d8d8" stroke-width="2"/>
<line x1="507" y1="805" x2="534" y2="805" stroke="#aaa" stroke-width="2.4" />
<circle cx="507" cy="805" r="11" fill="url(#gdot)" stroke="#e4e4e4" stroke-width="2"/>
<rect x="533" y="790.5" width="182" height="32" fill="#c2c2c2" stroke="#dcdcdc" stroke-width="1.6" />
<rect x="535" y="800.1" width="178" height="12.799999999999955" fill="url(#shaftH)"/>
<path d="M560.5,801.1 Q565.5,792.5 570.5,793.5 Q575.5,794.5 577.5,800.1 Z" fill="#555"/>
<path d="M563,811.9 Q558,820.5 553,819.5 Q548,818.5 546,812.9 Z" fill="#555"/>
<path d="M560,812.9 L563.5,800.1" stroke="#3a3a3a" stroke-width="3" opacity="0.7"/>
<path d="M592.0,801.1 Q597.0,792.5 602.0,793.5 Q607.0,794.5 609.0,800.1 Z" fill="#555"/>
<path d="M594.5,811.9 Q589.5,820.5 584.5,819.5 Q579.5,818.5 577.5,812.9 Z" fill="#555"/>
<path d="M591.5,812.9 L595.0,800.1" stroke="#3a3a3a" stroke-width="3" opacity="0.7"/>
<path d="M623.5,801.1 Q628.5,792.5 633.5,793.5 Q638.5,794.5 640.5,800.1 Z" fill="#555"/>
<path d="M626,811.9 Q621,820.5 616,819.5 Q611,818.5 609,812.9 Z" fill="#555"/>
<path d="M623,812.9 L626.5,800.1" stroke="#3a3a3a" stroke-width="3" opacity="0.7"/>
<path d="M654.5,801.1 Q659.5,792.5 664.5,793.5 Q669.5,794.5 671.5,800.1 Z" fill="#555"/>
<path d="M657,811.9 Q652,820.5 647,819.5 Q642,818.5 640,812.9 Z" fill="#555"/>
<path d="M654,812.9 L657.5,800.1" stroke="#3a3a3a" stroke-width="3" opacity="0.7"/>
<path d="M685.5,801.1 Q690.5,792.5 695.5,793.5 Q700.5,794.5 702.5,800.1 Z" fill="#555"/>
<path d="M688,811.9 Q683,820.5 678,819.5 Q673,818.5 671,812.9 Z" fill="#555"/>
<path d="M685,812.9 L688.5,800.1" stroke="#3a3a3a" stroke-width="3" opacity="0.7"/>
<line x1="569" y1="773" x2="631" y2="773" stroke="#d6d6d6" stroke-width="2.6" />
<path d="M629,765 L639,773 L629,781 Z" fill="#d6d6d6"/>
<text x="704" y="693" font-size="14.5" fill="#d6c26a" text-anchor="middle" font-weight="bold"  textLength="57" lengthAdjust="spacingAndGlyphs">M 1A02</text>
<line x1="704" y1="746" x2="704" y2="760" stroke="#c9c9c9" stroke-width="2.6" />
<line x1="704" y1="786" x2="704" y2="791" stroke="#c9c9c9" stroke-width="2.6" />
<circle cx="704.5" cy="727.5" r="18" fill="#c8c8c8" stroke="#dcdcdc" stroke-width="2"/>
<text x="704.5" y="733.5" font-size="16" fill="#525252" text-anchor="middle" font-weight="bold" >M</text>
<rect x="660" y="759.5" width="89" height="26" fill="none" stroke="#8a8c94" stroke-width="1.3" />
<text x="731" y="780.5" font-size="18" fill="#f3962c" text-anchor="end" font-weight="normal" >0 %</text>
<text x="824" y="516.5" font-size="15" fill="#c6c6c6" text-anchor="middle" font-weight="bold"  textLength="66.5" lengthAdjust="spacingAndGlyphs">BIOMASS</text>
<text x="824" y="534.5" font-size="15" fill="#c6c6c6" text-anchor="middle" font-weight="bold"  textLength="68" lengthAdjust="spacingAndGlyphs">STORAGE</text>
<text x="824" y="552.5" font-size="15" fill="#c6c6c6" text-anchor="middle" font-weight="bold"  textLength="76" lengthAdjust="spacingAndGlyphs">HOPPER 3</text>
<line x1="822" y1="727" x2="822" y2="791" stroke="#c9c9c9" stroke-width="2.6" />
<path d="M773,565 L871,565 L871,703 L822.0,727 L773,703 Z" fill="url(#hopBrown)" stroke="#c9c9c9" stroke-width="4.5"/>
<rect x="779" y="571" width="32" height="33" fill="#ea3a3a" stroke="none" stroke-width="0" rx="3"/>
<path d="M788,581 L802,594 M802,581 L788,594" stroke="#fff" stroke-width="4" fill="none"/>
<circle cx="871" cy="596" r="11" fill="url(#gdot)" stroke="#e4e4e4" stroke-width="2"/>
<rect x="778" y="627.5" width="88" height="26" fill="#3f4148" stroke="#a08a6a" stroke-width="1.3" />
<text x="848" y="648.5" font-size="18" fill="#f3962c" text-anchor="end" font-weight="normal" >0 %</text>
<circle cx="871" cy="681" r="15.5" fill="none" stroke="#f5a01c" stroke-width="3"/>
<circle cx="871" cy="681" r="10.5" fill="#1cf224" stroke="#d8d8d8" stroke-width="2"/>
<line x1="784" y1="805" x2="811" y2="805" stroke="#aaa" stroke-width="2.4" />
<circle cx="784" cy="805" r="11" fill="url(#gdot)" stroke="#e4e4e4" stroke-width="2"/>
<rect x="810" y="790.5" width="182" height="32" fill="#c2c2c2" stroke="#dcdcdc" stroke-width="1.6" />
<rect x="812" y="800.1" width="178" height="12.799999999999955" fill="url(#shaftH)"/>
<path d="M837.5,801.1 Q842.5,792.5 847.5,793.5 Q852.5,794.5 854.5,800.1 Z" fill="#555"/>
<path d="M840,811.9 Q835,820.5 830,819.5 Q825,818.5 823,812.9 Z" fill="#555"/>
<path d="M837,812.9 L840.5,800.1" stroke="#3a3a3a" stroke-width="3" opacity="0.7"/>
<path d="M869.0,801.1 Q874.0,792.5 879.0,793.5 Q884.0,794.5 886.0,800.1 Z" fill="#555"/>
<path d="M871.5,811.9 Q866.5,820.5 861.5,819.5 Q856.5,818.5 854.5,812.9 Z" fill="#555"/>
<path d="M868.5,812.9 L872.0,800.1" stroke="#3a3a3a" stroke-width="3" opacity="0.7"/>
<path d="M900.5,801.1 Q905.5,792.5 910.5,793.5 Q915.5,794.5 917.5,800.1 Z" fill="#555"/>
<path d="M903,811.9 Q898,820.5 893,819.5 Q888,818.5 886,812.9 Z" fill="#555"/>
<path d="M900,812.9 L903.5,800.1" stroke="#3a3a3a" stroke-width="3" opacity="0.7"/>
<path d="M931.5,801.1 Q936.5,792.5 941.5,793.5 Q946.5,794.5 948.5,800.1 Z" fill="#555"/>
<path d="M934,811.9 Q929,820.5 924,819.5 Q919,818.5 917,812.9 Z" fill="#555"/>
<path d="M931,812.9 L934.5,800.1" stroke="#3a3a3a" stroke-width="3" opacity="0.7"/>
<path d="M962.5,801.1 Q967.5,792.5 972.5,793.5 Q977.5,794.5 979.5,800.1 Z" fill="#555"/>
<path d="M965,811.9 Q960,820.5 955,819.5 Q950,818.5 948,812.9 Z" fill="#555"/>
<path d="M962,812.9 L965.5,800.1" stroke="#3a3a3a" stroke-width="3" opacity="0.7"/>
<line x1="846" y1="773" x2="908" y2="773" stroke="#d6d6d6" stroke-width="2.6" />
<path d="M906,765 L916,773 L906,781 Z" fill="#d6d6d6"/>
<text x="981" y="693" font-size="14.5" fill="#d6c26a" text-anchor="middle" font-weight="bold"  textLength="57" lengthAdjust="spacingAndGlyphs">M 1A03</text>
<line x1="981" y1="746" x2="981" y2="760" stroke="#c9c9c9" stroke-width="2.6" />
<line x1="981" y1="786" x2="981" y2="791" stroke="#c9c9c9" stroke-width="2.6" />
<circle cx="981.5" cy="727.5" r="18" fill="#c8c8c8" stroke="#dcdcdc" stroke-width="2"/>
<text x="981.5" y="733.5" font-size="16" fill="#525252" text-anchor="middle" font-weight="bold" >M</text>
<rect x="937" y="759.5" width="89" height="26" fill="none" stroke="#8a8c94" stroke-width="1.3" />
<text x="1008" y="780.5" font-size="18" fill="#f3962c" text-anchor="end" font-weight="normal" >0 %</text>
<line x1="699" y1="832" x2="699" y2="862" stroke="#d6d6d6" stroke-width="3" />
<path d="M690,859 L699,870 L708,859 Z" fill="#d6d6d6"/>
<line x1="977" y1="832" x2="977" y2="862" stroke="#d6d6d6" stroke-width="3" />
<path d="M968,859 L977,870 L986,859 Z" fill="#d6d6d6"/>
<line x1="232.5" y1="915" x2="232.5" y2="930" stroke="#aaa" stroke-width="2.2" />
<circle cx="232.5" cy="939.5" r="16.0" fill="none" stroke="#f5a01c" stroke-width="3"/>
<circle cx="232.5" cy="939.5" r="11.5" fill="url(#gdot)" stroke="#e4e4e4" stroke-width="2"/>
<line x1="431" y1="915" x2="431" y2="930" stroke="#aaa" stroke-width="2.2" />
<circle cx="431" cy="939.5" r="11.5" fill="url(#gdot)" stroke="#e4e4e4" stroke-width="2"/>
<line x1="879" y1="915" x2="879" y2="930" stroke="#aaa" stroke-width="2.2" />
<circle cx="879" cy="939.5" r="11.5" fill="url(#gdot)" stroke="#e4e4e4" stroke-width="2"/>
<line x1="952" y1="915" x2="952" y2="930" stroke="#aaa" stroke-width="2.2" />
<circle cx="952" cy="939.5" r="11.5" fill="url(#gdot)" stroke="#e4e4e4" stroke-width="2"/>
<path d="M1101,928 L1160,990" stroke="#262626" stroke-width="11"/>
<rect x="233" y="890" width="858" height="25.5" fill="url(#beltH)" stroke="none" stroke-width="1" />
<path d="M623.0,893.5 L632.5,902.5 L623.0,911.5 Z" fill="#1a1a1a"/>
<path d="M656.0,893.5 L665.5,902.5 L656.0,911.5 Z" fill="#1a1a1a"/>
<path d="M689.5,893.5 L699,902.5 L689.5,911.5 Z" fill="#1a1a1a"/>
<rect x="1047" y="869.5" width="80" height="63" fill="url(#dbox)" stroke="#2a2a2a" stroke-width="1" />
<rect x="1045.5" y="890" width="46" height="25.5" fill="url(#beltH)" stroke="none" stroke-width="1" />
<circle cx="233" cy="902.5" r="12" fill="#464646" stroke="#2a2a2a" stroke-width="1.5"/>
<circle cx="1091.5" cy="902.5" r="12.5" fill="#464646" stroke="#2a2a2a" stroke-width="1.5"/>
<text x="1088.5" y="793" font-size="14.5" fill="#d6c26a" text-anchor="middle" font-weight="bold"  textLength="58" lengthAdjust="spacingAndGlyphs">M 1A04</text>
<line x1="1089.5" y1="845" x2="1089.5" y2="870" stroke="#c9c9c9" stroke-width="2.6" />
<circle cx="1089.5" cy="826.5" r="18" fill="#c8c8c8" stroke="#dcdcdc" stroke-width="2"/>
<text x="1089.5" y="832.5" font-size="16" fill="#525252" text-anchor="middle" font-weight="bold" >M</text>
<line x1="1126.5" y1="958" x2="1126.5" y2="985" stroke="#aaa" stroke-width="2.2" />
<circle cx="1126.5" cy="993" r="11.5" fill="url(#gdot)" stroke="#e4e4e4" stroke-width="2"/>
<line x1="1178" y1="1005" x2="1195" y2="1005" stroke="#aaa" stroke-width="2.2" />
<circle cx="1201.5" cy="1004.5" r="11.5" fill="url(#gdot)" stroke="#e4e4e4" stroke-width="2"/>
<rect x="1153" y="248" width="26.5" height="760" fill="url(#beltV)" stroke="none" stroke-width="1" />
<path d="M1157.5,554.2 L1166.3,545.0 L1175,554.2 Z" fill="#1e1e1e"/>
<path d="M1157.5,587.1 L1166.3,577.9 L1175,587.1 Z" fill="#1e1e1e"/>
<path d="M1157.5,619.5 L1166.3,610.3 L1175,619.5 Z" fill="#1e1e1e"/>
<circle cx="1166" cy="1008" r="12.5" fill="#464646" stroke="#2a2a2a" stroke-width="1.5"/>
<defs>
<linearGradient id="dryer" x1="0" y1="0" x2="0" y2="1"><stop offset="0" stop-color="#bd7e5c"/><stop offset="0.5" stop-color="#9a5632"/><stop offset="1" stop-color="#7c3a0c"/></linearGradient>
</defs>
<text x="1211" y="144" font-size="14.5" fill="#d6c26a" text-anchor="middle" font-weight="bold"  textLength="58" lengthAdjust="spacingAndGlyphs">M 1A05</text>
<line x1="1211" y1="196" x2="1211" y2="225" stroke="#c9c9c9" stroke-width="2.6" />
<circle cx="1211" cy="178" r="18" fill="#c8c8c8" stroke="#dcdcdc" stroke-width="2"/>
<text x="1211" y="184" font-size="16" fill="#525252" text-anchor="middle" font-weight="bold" >M</text>
<path d="M1236,262 L1434,316" stroke="#262626" stroke-width="10"/>
<rect x="1182" y="224" width="60" height="51" fill="url(#dbox)" stroke="#2a2a2a" stroke-width="1" />
<rect x="1166" y="236" width="46" height="24" fill="url(#beltH)" stroke="none" stroke-width="1" />
<circle cx="1166.5" cy="248" r="12.3" fill="#464646" stroke="#2a2a2a" stroke-width="1.5"/>
<circle cx="1212" cy="248" r="12.3" fill="#464646" stroke="#2a2a2a" stroke-width="1.5"/>
<line x1="1341" y1="332" x2="1383" y2="332" stroke="#c9c9c9" stroke-width="2.6" />
<line x1="1463" y1="332" x2="1476" y2="332" stroke="#aaa" stroke-width="2.4" />
<line x1="1452.5" y1="347" x2="1452.5" y2="431" stroke="#c9c9c9" stroke-width="2.6" />
<rect x="1382" y="315" width="81" height="32" fill="#c2c2c2" stroke="#dcdcdc" stroke-width="1.6" />
<rect x="1384" y="324.6" width="77" height="12.799999999999955" fill="url(#shaftH)"/>
<path d="M1411.5,325.6 Q1416.5,317 1421.5,318 Q1426.5,319 1428.5,324.6 Z" fill="#555"/>
<path d="M1414,336.4 Q1409,345 1404,344 Q1399,343 1397,337.4 Z" fill="#555"/>
<path d="M1411,337.4 L1414.5,324.6" stroke="#3a3a3a" stroke-width="3" opacity="0.7"/>
<path d="M1442.5,325.6 Q1447.5,317 1452.5,318 Q1457.5,319 1459.5,324.6 Z" fill="#555"/>
<path d="M1445,336.4 Q1440,345 1435,344 Q1430,343 1428,337.4 Z" fill="#555"/>
<path d="M1442,337.4 L1445.5,324.6" stroke="#3a3a3a" stroke-width="3" opacity="0.7"/>
<circle cx="1323" cy="332" r="18" fill="#c8c8c8" stroke="#dcdcdc" stroke-width="2"/>
<text x="1323" y="338" font-size="16" fill="#525252" text-anchor="middle" font-weight="bold" >M</text>
<circle cx="1486" cy="332" r="11.5" fill="url(#gdot)" stroke="#e4e4e4" stroke-width="2"/>
<text x="1318" y="377" font-size="14.5" fill="#d6c26a" text-anchor="middle" font-weight="bold"  textLength="58" lengthAdjust="spacingAndGlyphs">M 1A15</text>
<line x1="1427.8" y1="727" x2="1427.8" y2="756" stroke="#c9c9c9" stroke-width="2" />
<line x1="1427.8" y1="850" x2="1427.8" y2="874" stroke="#c9c9c9" stroke-width="2" />
<line x1="1460.6" y1="727" x2="1460.6" y2="756" stroke="#c9c9c9" stroke-width="2" />
<line x1="1460.6" y1="850" x2="1460.6" y2="874" stroke="#c9c9c9" stroke-width="2" />
<line x1="1493" y1="727" x2="1493" y2="756" stroke="#c9c9c9" stroke-width="2" />
<line x1="1493" y1="850" x2="1493" y2="874" stroke="#c9c9c9" stroke-width="2" />
<line x1="1565" y1="727" x2="1565" y2="756" stroke="#c9c9c9" stroke-width="2" />
<line x1="1565" y1="850" x2="1565" y2="874" stroke="#c9c9c9" stroke-width="2" />
<line x1="1597.5" y1="727" x2="1597.5" y2="756" stroke="#c9c9c9" stroke-width="2" />
<line x1="1597.5" y1="850" x2="1597.5" y2="874" stroke="#c9c9c9" stroke-width="2" />
<line x1="1630" y1="727" x2="1630" y2="756" stroke="#c9c9c9" stroke-width="2" />
<line x1="1630" y1="850" x2="1630" y2="874" stroke="#c9c9c9" stroke-width="2" />
<line x1="1427.8" y1="874" x2="1630" y2="874" stroke="#c9c9c9" stroke-width="2" />
<line x1="1530.5" y1="874" x2="1530.5" y2="912" stroke="#c9c9c9" stroke-width="2" />
<line x1="1530.5" y1="928" x2="1530.5" y2="952" stroke="#c9c9c9" stroke-width="2" />
<line x1="1530.5" y1="952" x2="2009" y2="952" stroke="#c9c9c9" stroke-width="2" />
<line x1="2009" y1="952" x2="2009" y2="1292" stroke="#c9c9c9" stroke-width="2" />
<path d="M2000,1289 L2009,1300 L2018,1289 Z" fill="#c9c9c9"/>
<rect x="1414.2" y="755.5" width="25.8" height="95" fill="#c2c2c2" stroke="#dcdcdc" stroke-width="1.6" />
<rect x="1421.94" y="757.5" width="10.319999999999936" height="91" fill="url(#shaftV)"/>
<path d="M1432.26,766 Q1437.0,770 1437.0,774 Q1437.0,778 1431.26,780 Z" fill="#555"/>
<path d="M1421.94,791.5 Q1417.2,787.5 1417.2,783.5 Q1417.2,779.5 1422.94,777.5 Z" fill="#555"/>
<path d="M1432.26,790 Q1437.0,794 1437.0,798 Q1437.0,802 1431.26,804 Z" fill="#555"/>
<path d="M1421.94,815.5 Q1417.2,811.5 1417.2,807.5 Q1417.2,803.5 1422.94,801.5 Z" fill="#555"/>
<path d="M1432.26,814 Q1437.0,818 1437.0,822 Q1437.0,826 1431.26,828 Z" fill="#555"/>
<path d="M1421.94,839.5 Q1417.2,835.5 1417.2,831.5 Q1417.2,827.5 1422.94,825.5 Z" fill="#555"/>
<rect x="1446.8" y="755.5" width="25.8" height="95" fill="#c2c2c2" stroke="#dcdcdc" stroke-width="1.6" />
<rect x="1454.54" y="757.5" width="10.319999999999936" height="91" fill="url(#shaftV)"/>
<path d="M1464.86,766 Q1469.6,770 1469.6,774 Q1469.6,778 1463.86,780 Z" fill="#555"/>
<path d="M1454.54,791.5 Q1449.8,787.5 1449.8,783.5 Q1449.8,779.5 1455.54,777.5 Z" fill="#555"/>
<path d="M1464.86,790 Q1469.6,794 1469.6,798 Q1469.6,802 1463.86,804 Z" fill="#555"/>
<path d="M1454.54,815.5 Q1449.8,811.5 1449.8,807.5 Q1449.8,803.5 1455.54,801.5 Z" fill="#555"/>
<path d="M1464.86,814 Q1469.6,818 1469.6,822 Q1469.6,826 1463.86,828 Z" fill="#555"/>
<path d="M1454.54,839.5 Q1449.8,835.5 1449.8,831.5 Q1449.8,827.5 1455.54,825.5 Z" fill="#555"/>
<rect x="1479.5" y="755.5" width="25.8" height="95" fill="#c2c2c2" stroke="#dcdcdc" stroke-width="1.6" />
<rect x="1487.24" y="757.5" width="10.319999999999936" height="91" fill="url(#shaftV)"/>
<path d="M1497.56,766 Q1502.3,770 1502.3,774 Q1502.3,778 1496.56,780 Z" fill="#555"/>
<path d="M1487.24,791.5 Q1482.5,787.5 1482.5,783.5 Q1482.5,779.5 1488.24,777.5 Z" fill="#555"/>
<path d="M1497.56,790 Q1502.3,794 1502.3,798 Q1502.3,802 1496.56,804 Z" fill="#555"/>
<path d="M1487.24,815.5 Q1482.5,811.5 1482.5,807.5 Q1482.5,803.5 1488.24,801.5 Z" fill="#555"/>
<path d="M1497.56,814 Q1502.3,818 1502.3,822 Q1502.3,826 1496.56,828 Z" fill="#555"/>
<path d="M1487.24,839.5 Q1482.5,835.5 1482.5,831.5 Q1482.5,827.5 1488.24,825.5 Z" fill="#555"/>
<rect x="1552.7" y="755.5" width="25.8" height="95" fill="#c2c2c2" stroke="#dcdcdc" stroke-width="1.6" />
<rect x="1560.44" y="757.5" width="10.319999999999936" height="91" fill="url(#shaftV)"/>
<path d="M1570.76,766 Q1575.5,770 1575.5,774 Q1575.5,778 1569.76,780 Z" fill="#555"/>
<path d="M1560.44,791.5 Q1555.7,787.5 1555.7,783.5 Q1555.7,779.5 1561.44,777.5 Z" fill="#555"/>
<path d="M1570.76,790 Q1575.5,794 1575.5,798 Q1575.5,802 1569.76,804 Z" fill="#555"/>
<path d="M1560.44,815.5 Q1555.7,811.5 1555.7,807.5 Q1555.7,803.5 1561.44,801.5 Z" fill="#555"/>
<path d="M1570.76,814 Q1575.5,818 1575.5,822 Q1575.5,826 1569.76,828 Z" fill="#555"/>
<path d="M1560.44,839.5 Q1555.7,835.5 1555.7,831.5 Q1555.7,827.5 1561.44,825.5 Z" fill="#555"/>
<rect x="1585" y="755.5" width="25.8" height="95" fill="#c2c2c2" stroke="#dcdcdc" stroke-width="1.6" />
<rect x="1592.74" y="757.5" width="10.319999999999936" height="91" fill="url(#shaftV)"/>
<path d="M1603.06,766 Q1607.8,770 1607.8,774 Q1607.8,778 1602.06,780 Z" fill="#555"/>
<path d="M1592.74,791.5 Q1588,787.5 1588,783.5 Q1588,779.5 1593.74,777.5 Z" fill="#555"/>
<path d="M1603.06,790 Q1607.8,794 1607.8,798 Q1607.8,802 1602.06,804 Z" fill="#555"/>
<path d="M1592.74,815.5 Q1588,811.5 1588,807.5 Q1588,803.5 1593.74,801.5 Z" fill="#555"/>
<path d="M1603.06,814 Q1607.8,818 1607.8,822 Q1607.8,826 1602.06,828 Z" fill="#555"/>
<path d="M1592.74,839.5 Q1588,835.5 1588,831.5 Q1588,827.5 1593.74,825.5 Z" fill="#555"/>
<rect x="1617.6" y="755.5" width="25.8" height="95" fill="#c2c2c2" stroke="#dcdcdc" stroke-width="1.6" />
<rect x="1625.34" y="757.5" width="10.319999999999936" height="91" fill="url(#shaftV)"/>
<path d="M1635.6599999999999,766 Q1640.3999999999999,770 1640.3999999999999,774 Q1640.3999999999999,778 1634.6599999999999,780 Z" fill="#555"/>
<path d="M1625.34,791.5 Q1620.6,787.5 1620.6,783.5 Q1620.6,779.5 1626.34,777.5 Z" fill="#555"/>
<path d="M1635.6599999999999,790 Q1640.3999999999999,794 1640.3999999999999,798 Q1640.3999999999999,802 1634.6599999999999,804 Z" fill="#555"/>
<path d="M1625.34,815.5 Q1620.6,811.5 1620.6,807.5 Q1620.6,803.5 1626.34,801.5 Z" fill="#555"/>
<path d="M1635.6599999999999,814 Q1640.3999999999999,818 1640.3999999999999,822 Q1640.3999999999999,826 1634.6599999999999,828 Z" fill="#555"/>
<path d="M1625.34,839.5 Q1620.6,835.5 1620.6,831.5 Q1620.6,827.5 1626.34,825.5 Z" fill="#555"/>
<line x1="1399" y1="821.3" x2="1414" y2="821.3" stroke="#aaa" stroke-width="2.4" />
<line x1="1644" y1="821.3" x2="1659" y2="821.3" stroke="#aaa" stroke-width="2.4" />
<circle cx="1389.2" cy="821.3" r="10.5" fill="#1cf224" stroke="#d8d8d8" stroke-width="2"/>
<circle cx="1668.6" cy="821.3" r="10.5" fill="#1cf224" stroke="#d8d8d8" stroke-width="2"/>
<rect x="1386.5" y="618.5" width="15.5" height="98" fill="#4a4a4a" stroke="#b4b4b4" stroke-width="1.5" />
<rect x="1653" y="618.5" width="15.5" height="98" fill="#4a4a4a" stroke="#b4b4b4" stroke-width="1.5" />
<path d="M1437.2,432.4 L1617,432.4 L1649.3,484.4 L1649.3,726.7 L1404.5,726.7 L1404.5,484.4 Z" fill="url(#dryer)" stroke="#b9b9b9" stroke-width="6.4" stroke-linejoin="round"/>
<text x="1525" y="486.5" font-size="16.5" fill="#3a2a20" text-anchor="middle" font-weight="bold"  textLength="78" lengthAdjust="spacingAndGlyphs">BIOMASS</text>
<text x="1525" y="505" font-size="16.5" fill="#3a2a20" text-anchor="middle" font-weight="bold"  textLength="57" lengthAdjust="spacingAndGlyphs">DRYER</text>
<circle cx="1421.2" cy="460" r="11" fill="url(#gdot)" stroke="#e4e4e4" stroke-width="2"/>
<circle cx="1406.5" cy="500" r="11" fill="url(#gdot)" stroke="#e4e4e4" stroke-width="2"/>
<circle cx="1406.5" cy="541" r="11" fill="#1cf224" stroke="#d8d8d8" stroke-width="2"/>
<circle cx="1406.5" cy="588.8" r="14.5" fill="none" stroke="#f5a01c" stroke-width="3"/>
<circle cx="1406.5" cy="588.8" r="11" fill="#1cf224" stroke="#d8d8d8" stroke-width="2"/>
<circle cx="1634.6" cy="460" r="11" fill="#f01818" stroke="#d8d8d8" stroke-width="2"/>
<circle cx="1649.3" cy="500" r="11" fill="#1cf224" stroke="#d8d8d8" stroke-width="2"/>
<circle cx="1649.3" cy="541" r="11" fill="#1cf224" stroke="#d8d8d8" stroke-width="2"/>
<circle cx="1649.3" cy="588.8" r="14.5" fill="none" stroke="#f5a01c" stroke-width="3"/>
<circle cx="1649.3" cy="588.8" r="11" fill="#1cf224" stroke="#d8d8d8" stroke-width="2"/>
<text x="1476.6" y="620" font-size="14.5" fill="#d6c26a" text-anchor="middle" font-weight="bold"  textLength="58" lengthAdjust="spacingAndGlyphs">M 1A13</text>
<line x1="1476.6" y1="668" x2="1472.6" y2="681" stroke="#ddd" stroke-width="2.2" />
<line x1="1460.7" y1="707" x2="1460.7" y2="727" stroke="#ddd" stroke-width="2" />
<circle cx="1476.6" cy="651.4" r="18" fill="#1cf224" stroke="#c8f0c8" stroke-width="2"/>
<text x="1476.6" y="657.4" font-size="16" fill="#1f6a1f" text-anchor="middle" font-weight="bold" >M</text>
<rect x="1433.6" y="681" width="89.5" height="26.5" fill="#3f4148" stroke="#b89a78" stroke-width="1.3" />
<text x="1478.6" y="702.5" font-size="18" fill="#f3962c" text-anchor="middle" font-weight="normal" >60 %</text>
<text x="1579" y="620" font-size="14.5" fill="#d6c26a" text-anchor="middle" font-weight="bold"  textLength="58" lengthAdjust="spacingAndGlyphs">M 1A14</text>
<line x1="1579" y1="668" x2="1583" y2="681" stroke="#ddd" stroke-width="2.2" />
<line x1="1597" y1="707" x2="1597" y2="727" stroke="#ddd" stroke-width="2" />
<circle cx="1579" cy="651.4" r="18" fill="#1cf224" stroke="#c8f0c8" stroke-width="2"/>
<text x="1579" y="657.4" font-size="16" fill="#1f6a1f" text-anchor="middle" font-weight="bold" >M</text>
<rect x="1536" y="681" width="89.5" height="26.5" fill="#3f4148" stroke="#b89a78" stroke-width="1.3" />
<text x="1581" y="702.5" font-size="18" fill="#f3962c" text-anchor="middle" font-weight="normal" >60 %</text>
<line x1="1806" y1="267" x2="1816" y2="267" stroke="#aaa" stroke-width="2.6" />
<polyline points="1817,653 1817,241 2453,241" stroke="#1d9bd8" stroke-width="4.3" fill="none" stroke-linejoin="miter" stroke-linecap="square"/>
<path d="M2456,215.5 L2483,241.2 L2456,267.5" stroke="#1d9bd8" stroke-width="3.8" fill="none"/>
<path d="M2128,232 L2139,241 L2128,250 Z" fill="#1d9bd8"/>
<polyline points="1236,708 1236,390.6 1442,390.6" stroke="#1d9bd8" stroke-width="4.3" fill="none" stroke-linejoin="miter" stroke-linecap="square"/>
<polyline points="1462,390.6 1817,390.6" stroke="#1d9bd8" stroke-width="4.3" fill="none" stroke-linejoin="miter" stroke-linecap="square"/>
<path d="M1637,381.6 L1648,390.6 L1637,399.6 Z" fill="#1d9bd8"/>
<path d="M1227,532 L1236,521 L1245,532 Z" fill="#1d9bd8"/>
<polyline points="1236,681 1290,681" stroke="#1d9bd8" stroke-width="4.3" fill="none" stroke-linejoin="miter" stroke-linecap="square"/>
<polyline points="1306,681 1386,681" stroke="#1d9bd8" stroke-width="4.3" fill="none" stroke-linejoin="miter" stroke-linecap="square"/>
<path d="M1352,672 L1341,681 L1352,690 Z" fill="#1d9bd8"/>
<polyline points="1236,708 1290,708" stroke="#1d9bd8" stroke-width="4.3" fill="none" stroke-linejoin="miter" stroke-linecap="square"/>
<polyline points="1306,708 1386,708" stroke="#1d9bd8" stroke-width="4.3" fill="none" stroke-linejoin="miter" stroke-linecap="square"/>
<path d="M1352,699 L1341,708 L1352,717 Z" fill="#1d9bd8"/>
<polyline points="1298,626 1298,919 1882.8,919" stroke="#1d9bd8" stroke-width="4.3" fill="none" stroke-linejoin="miter" stroke-linecap="square"/>
<path d="M1289,813 L1298,802 L1307,813 Z" fill="#1d9bd8"/>
<path d="M1600,910 L1589,919 L1600,928 Z" fill="#1d9bd8"/>
<polyline points="1298,626 1386,626" stroke="#1d9bd8" stroke-width="4.3" fill="none" stroke-linejoin="miter" stroke-linecap="square"/>
<path d="M1342,617 L1353,626 L1342,635 Z" fill="#1d9bd8"/>
<polyline points="1668,626 1817,626" stroke="#1d9bd8" stroke-width="4.3" fill="none" stroke-linejoin="miter" stroke-linecap="square"/>
<path d="M1729,617 L1740,626 L1729,635 Z" fill="#1d9bd8"/>
<polyline points="1298,653 1386,653" stroke="#1d9bd8" stroke-width="4.3" fill="none" stroke-linejoin="miter" stroke-linecap="square"/>
<path d="M1342,644 L1353,653 L1342,662 Z" fill="#1d9bd8"/>
<polyline points="1668,653 1817,653" stroke="#1d9bd8" stroke-width="4.3" fill="none" stroke-linejoin="miter" stroke-linecap="square"/>
<path d="M1729,644 L1740,653 L1729,662 Z" fill="#1d9bd8"/>
<polyline points="1668,708 1817,708 1817,681" stroke="#1d9bd8" stroke-width="4.3" fill="none" stroke-linejoin="miter" stroke-linecap="square"/>
<path d="M1739,699 L1728,708 L1739,717 Z" fill="#1d9bd8"/>
<polyline points="1668,681 2418,681" stroke="#1d9bd8" stroke-width="4.3" fill="none" stroke-linejoin="miter" stroke-linecap="square"/>
<path d="M1739,672 L1728,681 L1739,690 Z" fill="#1d9bd8"/>
<path d="M2180,672 L2169,681 L2180,690 Z" fill="#1d9bd8"/>
<polyline points="2444.5,390.6 1882.8,390.6 1882.8,609.9 2418,609.9" stroke="#1d9bd8" stroke-width="4.3" fill="none" stroke-linejoin="miter" stroke-linecap="square"/>
<polyline points="1882.8,681 1882.8,919" stroke="#1d9bd8" stroke-width="4.3" fill="none" stroke-linejoin="miter" stroke-linecap="square"/>
<path d="M1873.8,798 L1882.8,809 L1891.8,798 Z" fill="#1d9bd8"/>
<g stroke="#d8d8d8" stroke-width="1.8" fill="none"><circle cx="2464" cy="390.6" r="20"/><path d="M2460,372.5 L2444.5,390.6 L2460,408.7 M2458,380 H2483 M2458,401 H2483"/></g>
<rect x="1661" y="241" width="145" height="54.5" fill="#26272c"/>
<rect x="1659" y="239" width="145" height="28" fill="#5b5d65" stroke="none" stroke-width="1" />
<line x1="1659" y1="239.5" x2="1804" y2="239.5" stroke="#74767e" stroke-width="1" />
<rect x="1659" y="267" width="145" height="26.5" fill="#3f4148" stroke="none" stroke-width="1" />
<line x1="1659" y1="293.0" x2="1804" y2="293.0" stroke="#2a2b30" stroke-width="1" />
<text x="1731.5" y="261" font-size="18" fill="#cfcfcf" text-anchor="middle" font-weight="normal" >TT 204</text>
<text x="1752" y="289" font-size="23" fill="#f3962c" text-anchor="end" font-weight="normal" >27</text>
<text x="1755" y="286" font-size="16" fill="#f3962c" text-anchor="start" font-weight="normal" >°C</text>
<line x1="2102.5" y1="594" x2="2102.5" y2="608" stroke="#aaa" stroke-width="2.6" />
<line x1="2314" y1="594" x2="2314" y2="608" stroke="#aaa" stroke-width="2.6" />
<line x1="2032" y1="683" x2="2032" y2="701" stroke="#aaa" stroke-width="2.6" />
<rect x="2030.5" y="540.5" width="144" height="54.5" fill="#26272c"/>
<rect x="2028.5" y="538.5" width="144" height="28" fill="#5b5d65" stroke="none" stroke-width="1" />
<line x1="2028.5" y1="539.0" x2="2172.5" y2="539.0" stroke="#74767e" stroke-width="1" />
<rect x="2028.5" y="566.5" width="144" height="26.5" fill="#3f4148" stroke="none" stroke-width="1" />
<line x1="2028.5" y1="592.5" x2="2172.5" y2="592.5" stroke="#2a2b30" stroke-width="1" />
<text x="2100.5" y="560.5" font-size="18" fill="#cfcfcf" text-anchor="middle" font-weight="normal" >FT 501</text>
<text x="2123" y="587" font-size="23" fill="#f3962c" text-anchor="end" font-weight="normal" >3549</text>
<text x="2124.5" y="587" font-size="16" fill="#f3962c" text-anchor="start" font-weight="normal"  textLength="34" lengthAdjust="spacingAndGlyphs">kg/h</text>
<circle cx="2194.8" cy="552.8" r="13.4" fill="#f56a10"/><path d="M2186,556 Q2194.8,543 2203.6,556" stroke="#fff" stroke-width="2.2" fill="none"/><path d="M2190,554 Q2195,550 2199,555" stroke="#fff" stroke-width="1.6" fill="none"/>
<rect x="2242.5" y="540.5" width="144" height="54.5" fill="#26272c"/>
<rect x="2240.5" y="538.5" width="144" height="28" fill="#5b5d65" stroke="none" stroke-width="1" />
<line x1="2240.5" y1="539.0" x2="2384.5" y2="539.0" stroke="#74767e" stroke-width="1" />
<rect x="2240.5" y="566.5" width="144" height="26.5" fill="#3f4148" stroke="none" stroke-width="1" />
<line x1="2240.5" y1="592.5" x2="2384.5" y2="592.5" stroke="#2a2b30" stroke-width="1" />
<text x="2312.5" y="560.5" font-size="18" fill="#cfcfcf" text-anchor="middle" font-weight="normal" >PT 302</text>
<text x="2334" y="587" font-size="23" fill="#f3962c" text-anchor="end" font-weight="normal" >63</text>
<text x="2336.5" y="587" font-size="16" fill="#f3962c" text-anchor="start" font-weight="normal"  textLength="40" lengthAdjust="spacingAndGlyphs">mbar</text>
<rect x="1962" y="703" width="144" height="81" fill="#26272c"/>
<rect x="1960" y="701" width="144" height="28" fill="#5b5d65" stroke="none" stroke-width="1" />
<rect x="1960" y="729" width="144" height="26.5" fill="#3f4148" stroke="none" stroke-width="1" />
<rect x="1960" y="755.5" width="144" height="26.5" fill="#3f4148" stroke="none" stroke-width="1" />
<line x1="1960" y1="755.5" x2="2104" y2="755.5" stroke="#5a5c64" stroke-width="1" />
<text x="2032" y="723" font-size="18" fill="#cfcfcf" text-anchor="middle" font-weight="normal" >TT 201</text>
<text x="1963" y="747" font-size="11" fill="#bbb" text-anchor="start" font-weight="normal"  textLength="15" lengthAdjust="spacingAndGlyphs">PV</text>
<text x="1963" y="773" font-size="11" fill="#bbb" text-anchor="start" font-weight="normal"  textLength="15" lengthAdjust="spacingAndGlyphs">SP</text>
<text x="2050" y="749" font-size="23" fill="#f3962c" text-anchor="end" font-weight="normal" >76</text>
<text x="2052" y="746" font-size="16" fill="#f3962c" text-anchor="start" font-weight="normal" >°C</text>
<text x="2050" y="775" font-size="23" fill="#e8e04a" text-anchor="end" font-weight="normal" >85</text>
<text x="2052" y="772" font-size="16" fill="#e8e04a" text-anchor="start" font-weight="normal" >°C</text>
<text x="1963.5" y="571" font-size="14.5" fill="#d6c26a" text-anchor="middle" font-weight="bold"  textLength="57.6" lengthAdjust="spacingAndGlyphs">M 1A06</text>
<circle cx="1964.8" cy="609.9" r="27.7" fill="none" stroke="#f5a01c" stroke-width="6.4"/>
<circle cx="1964.8" cy="609.9" r="24" fill="#1cf224" stroke="#2a7a2a" stroke-width="1.5"/>
<g stroke="#2a7a2a" stroke-width="1.6" fill="none"><path d="M1952,589 L1986,604 M1952,631 L1986,616"/><path d="M1958,610 Q1953,598 1957,590 Q1962,600 1958,610 Z M1958,610 Q1953,622 1957,630 Q1962,620 1958,610 Z M1958,610 Q1968,606 1979,610 Q1968,614 1958,610 Z"/></g>
<text x="1963.7" y="656.5" font-size="13" fill="#c8c8c8" text-anchor="middle" font-weight="normal"  textLength="102.5" lengthAdjust="spacingAndGlyphs">DRYER BLOWER</text>
<defs><linearGradient id="hx" x1="0" y1="0" x2="1" y2="0">
<stop offset="0" stop-color="#5a5a5a"/><stop offset="0.45" stop-color="#bdbdbd"/><stop offset="0.7" stop-color="#a8a8a8"/><stop offset="1" stop-color="#6a6a6a"/></linearGradient>
<linearGradient id="feed" x1="0" y1="0" x2="1" y2="0">
<stop offset="0" stop-color="#46474a"/><stop offset="1" stop-color="#1f2022"/></linearGradient>
<linearGradient id="feedR" x1="1" y1="0" x2="0" y2="0">
<stop offset="0" stop-color="#46474a"/><stop offset="1" stop-color="#1f2022"/></linearGradient></defs>
<polyline points="2459,575 2459,522 2954,522" stroke="#2bb14a" stroke-width="3.6" fill="none" stroke-linecap="square"/>
<polyline points="2459,707 2459,759 2954,759" stroke="#2bb14a" stroke-width="3.6" fill="none" stroke-linecap="square"/>
<polyline points="2545.7,522 2545.7,487" stroke="#2bb14a" stroke-width="3.6" fill="none" stroke-linecap="square"/>
<polyline points="2545.7,452 2545.7,419" stroke="#2bb14a" stroke-width="3.6" fill="none" stroke-linecap="square"/>
<path d="M2545.7,420 A14.5,14.5 0 0 1 2574.7,419" stroke="#2bb14a" stroke-width="3.6" fill="none"/>
<polyline points="2545.7,759 2545.7,793" stroke="#2bb14a" stroke-width="3.6" fill="none" stroke-linecap="square"/>
<polyline points="2545.7,829 2545.7,852" stroke="#2bb14a" stroke-width="3.6" fill="none" stroke-linecap="square"/>
<path d="M2537,851 L2545.7,863 L2554.5,851 Z" fill="#2bb14a"/>
<path d="M2535.7,452.5 L2555.7,452.5 L2535.7,487 L2555.7,487 Z" stroke="#d8d8d8" stroke-width="1.8" fill="none"/>
<path d="M2535.7,793.5 L2555.7,793.5 L2535.7,829 L2555.7,829 Z" stroke="#d8d8d8" stroke-width="1.8" fill="none"/>
<path d="M2531,877 L2545.7,887 L2560,877 M2545.7,887 V901" stroke="#cfcfcf" stroke-width="1.6" fill="none"/>
<rect x="2418" y="575" width="83" height="132" fill="url(#hx)" stroke="#a0a0a0" stroke-width="1.5" />
<path d="M2422.5,608 H2486 L2454,645 L2486,682 H2422.5" stroke="#1e1e1e" stroke-width="7.5" fill="none" stroke-linejoin="miter"/>
<text x="2512.5" y="637.5" font-size="15" fill="#cccccc" text-anchor="start" font-weight="bold"  textLength="134" lengthAdjust="spacingAndGlyphs">HEAT EXCHANGER</text>
<text x="2512.5" y="656" font-size="15" fill="#cccccc" text-anchor="start" font-weight="bold"  textLength="122.5" lengthAdjust="spacingAndGlyphs">BIOMASS DRYER</text>
<line x1="2685" y1="506" x2="2685" y2="521" stroke="#aaa" stroke-width="2.6" />
<line x1="2685" y1="742" x2="2685" y2="758" stroke="#aaa" stroke-width="2.6" />
<rect x="2613" y="453.5" width="145" height="54.5" fill="#26272c"/>
<rect x="2611" y="451.5" width="145" height="28" fill="#5b5d65" stroke="none" stroke-width="1" />
<line x1="2611" y1="452.0" x2="2756" y2="452.0" stroke="#74767e" stroke-width="1" />
<rect x="2611" y="479.5" width="145" height="26.5" fill="#3f4148" stroke="none" stroke-width="1" />
<line x1="2611" y1="505.5" x2="2756" y2="505.5" stroke="#2a2b30" stroke-width="1" />
<text x="2683.5" y="473.5" font-size="18" fill="#cfcfcf" text-anchor="middle" font-weight="normal" >TT 202</text>
<text x="2706" y="501" font-size="23" fill="#f3962c" text-anchor="end" font-weight="normal" >51</text>
<text x="2708" y="498" font-size="16" fill="#f3962c" text-anchor="start" font-weight="normal" >°C</text>
<rect x="2614" y="690" width="145" height="54.5" fill="#26272c"/>
<rect x="2612" y="688" width="145" height="28" fill="#5b5d65" stroke="none" stroke-width="1" />
<line x1="2612" y1="688.5" x2="2757" y2="688.5" stroke="#74767e" stroke-width="1" />
<rect x="2612" y="716" width="145" height="26.5" fill="#3f4148" stroke="none" stroke-width="1" />
<line x1="2612" y1="742.0" x2="2757" y2="742.0" stroke="#2a2b30" stroke-width="1" />
<text x="2684.5" y="710" font-size="18" fill="#cfcfcf" text-anchor="middle" font-weight="normal" >TT 203</text>
<text x="2707" y="737" font-size="23" fill="#f3962c" text-anchor="end" font-weight="normal" >143</text>
<text x="2709" y="734" font-size="16" fill="#f3962c" text-anchor="start" font-weight="normal" >°C</text>
<path d="M2954,501 H3149 L3166,521.5 L3149,542 H2954 Z" fill="url(#feed)" stroke="#d8d8d8" stroke-width="1.7"/>
<text x="3145" y="527" font-size="13" fill="#e0e0e0" text-anchor="end" font-weight="normal"  textLength="132" lengthAdjust="spacingAndGlyphs">HOT WATER CIRCUIT</text>
<path d="M3166,738 H2971 L2954,759 L2971,780 H3166 Z" fill="url(#feedR)" stroke="#d8d8d8" stroke-width="1.7"/>
<text x="2973" y="764" font-size="13" fill="#e0e0e0" text-anchor="start" font-weight="normal"  textLength="131" lengthAdjust="spacingAndGlyphs">HOT WATER CIRCUIT</text>
<defs>
<pattern id="chk" width="4.4" height="4.4" patternUnits="userSpaceOnUse" patternTransform="rotate(45)">
<rect width="4.4" height="4.4" fill="#3c3c3c"/><rect width="2.2" height="2.2" fill="#858585"/><rect x="2.2" y="2.2" width="2.2" height="2.2" fill="#858585"/></pattern>
<linearGradient id="msw" x1="0" y1="0" x2="0" y2="1"><stop offset="0" stop-color="#c27d5a"/><stop offset="0.45" stop-color="#98702e"/><stop offset="1" stop-color="#6c6000"/></linearGradient>
</defs>
<text x="742" y="1054.5" font-size="15" fill="#c2c2c2" text-anchor="middle" font-weight="bold"  textLength="73.5" lengthAdjust="spacingAndGlyphs">DOLAMITE</text>
<text x="742" y="1072.5" font-size="15" fill="#c2c2c2" text-anchor="middle" font-weight="bold"  textLength="55" lengthAdjust="spacingAndGlyphs">SYSTEM</text>
<line x1="696.7" y1="1222" x2="696.7" y2="1255" stroke="#c9c9c9" stroke-width="2" />
<line x1="784.6" y1="1222" x2="784.6" y2="1255" stroke="#c9c9c9" stroke-width="2" />
<path d="M693.1,1082.8 H792 V1221.6 L740.2,1245.6 L693.1,1221.6 Z" fill="url(#chk)" stroke="#c4c4c4" stroke-width="4.4"/>
<g stroke="#c9c9c9" stroke-width="2" fill="none"><path d="M688.3,1247 V1255 H705 V1247 M688.3,1256 L705.5,1272.4 L688.3,1288.6 H705.5"/><path d="M775.8,1247 V1255 H793 V1247 M793,1256 L775.8,1272.4 L793,1288.6 H775.8"/></g>
<line x1="740.2" y1="1245" x2="740.2" y2="1288" stroke="#c9c9c9" stroke-width="2.4" />
<path d="M729,1288.5 H751 L729,1323 H751 Z" stroke="#c9c9c9" stroke-width="2" fill="none"/>
<line x1="740.2" y1="1323" x2="740.2" y2="1362" stroke="#c9c9c9" stroke-width="2.4" />
<text x="621" y="1221" font-size="14.5" fill="#d6c26a" text-anchor="middle" font-weight="bold"  textLength="57" lengthAdjust="spacingAndGlyphs">M 1A16</text>
<line x1="643" y1="1255.7" x2="688" y2="1255.7" stroke="#c9c9c9" stroke-width="2.4" />
<circle cx="624" cy="1256" r="19" fill="#c8c8c8" stroke="#dcdcdc" stroke-width="2"/><path d="M611,1264 L622,1258" stroke="#555" stroke-width="1.8"/>
<text x="623" y="1302" font-size="13" fill="#c2c2c2" text-anchor="middle" font-weight="normal"  textLength="63" lengthAdjust="spacingAndGlyphs">VIBRATOR</text>
<text x="686" y="1342" font-size="14.5" fill="#d6c26a" text-anchor="middle" font-weight="bold"  textLength="57" lengthAdjust="spacingAndGlyphs">M 1A07</text>
<line x1="705" y1="1376.5" x2="733" y2="1376.5" stroke="#c9c9c9" stroke-width="2.4" />
<line x1="812" y1="1376.5" x2="822" y2="1376.5" stroke="#aaa" stroke-width="2.4" />
<polyline points="802,1393 802,1498 1218,1498 1218,1281 1299.5,1281" stroke="#c9c9c9" stroke-width="3" fill="none" />
<line x1="1299.5" y1="1281" x2="1299.5" y2="1301.5" stroke="#c9c9c9" stroke-width="3" />
<path d="M1290.5,1298.5 L1299.5,1309.5 L1308.5,1298.5 Z" fill="#c9c9c9"/>
<rect x="732.5" y="1361.5" width="80" height="32" fill="#c2c2c2" stroke="#dcdcdc" stroke-width="1.6" />
<rect x="734.5" y="1371.1" width="76" height="12.800000000000182" fill="url(#shaftH)"/>
<path d="M762.5,1372.1 Q767.5,1363.5 772.5,1364.5 Q777.5,1365.5 779.5,1371.1 Z" fill="#555"/>
<path d="M765,1382.9 Q760,1391.5 755,1390.5 Q750,1389.5 748,1383.9 Z" fill="#555"/>
<path d="M762,1383.9 L765.5,1371.1" stroke="#3a3a3a" stroke-width="3" opacity="0.7"/>
<path d="M793.5,1372.1 Q798.5,1363.5 803.5,1364.5 Q808.5,1365.5 810.5,1371.1 Z" fill="#555"/>
<path d="M796,1382.9 Q791,1391.5 786,1390.5 Q781,1389.5 779,1383.9 Z" fill="#555"/>
<path d="M793,1383.9 L796.5,1371.1" stroke="#3a3a3a" stroke-width="3" opacity="0.7"/>
<circle cx="686" cy="1376.5" r="18" fill="#1cf224" stroke="#c8f0c8" stroke-width="2"/>
<text x="686" y="1382.5" font-size="16" fill="#1f6a1f" text-anchor="middle" font-weight="bold" >M</text>
<circle cx="836" cy="1376.5" r="15.0" fill="none" stroke="#f5a01c" stroke-width="3"/>
<circle cx="836" cy="1376.5" r="10.5" fill="#1cf224" stroke="#d8d8d8" stroke-width="2"/>
<text x="813" y="1353" font-size="13" fill="#c2c2c2" text-anchor="middle" font-weight="normal"  textLength="103" lengthAdjust="spacingAndGlyphs">SCREW FEEDER</text>
<text x="1344" y="971.5" font-size="15" fill="#c2c2c2" text-anchor="middle" font-weight="bold"  textLength="111" lengthAdjust="spacingAndGlyphs">MSW  STORAGE</text>
<text x="1344" y="989.5" font-size="15" fill="#c2c2c2" text-anchor="middle" font-weight="bold"  textLength="77" lengthAdjust="spacingAndGlyphs">HOPPER 1</text>
<line x1="1343" y1="1162" x2="1343" y2="1224" stroke="#c9c9c9" stroke-width="2.6" />
<line x1="1268" y1="1149.6" x2="1310" y2="1149.6" stroke="#c9c9c9" stroke-width="2.6" />
<path d="M1294.2,1001.3 H1392.7 V1140 L1342.5,1162.5 L1294.2,1140 Z" fill="url(#msw)" stroke="#c9c9c9" stroke-width="4.5"/>
<rect x="1300.5" y="1007" width="32" height="33" fill="#22ea22" stroke="none" stroke-width="0" rx="3"/>
<path d="M1308.5,1024 L1314.5,1030 L1325.5,1016" stroke="#1e2e1e" stroke-width="4" fill="none"/>
<circle cx="1392.3" cy="1028.3" r="11.5" fill="url(#gdot)" stroke="#e4e4e4" stroke-width="2"/>
<rect x="1299.6" y="1061" width="87" height="25" fill="#fff" stroke="none" stroke-width="1" />
<text x="1342" y="1080" font-size="18" fill="#444" text-anchor="middle" font-weight="normal" >100 %</text>
<circle cx="1392.3" cy="1113.5" r="15.0" fill="none" stroke="#f5a01c" stroke-width="3"/>
<circle cx="1392.3" cy="1113.5" r="10.5" fill="#1cf224" stroke="#d8d8d8" stroke-width="2"/>
<text x="1240" y="1116" font-size="14.5" fill="#d6c26a" text-anchor="middle" font-weight="bold"  textLength="58" lengthAdjust="spacingAndGlyphs">M 1A17</text>
<circle cx="1242.8" cy="1149.6" r="23" fill="none" stroke="#f5a01c" stroke-width="4.5"/>
<circle cx="1242.8" cy="1149.6" r="19.5" fill="#c8c8c8" stroke="#e0e0e0" stroke-width="1.5"/><path d="M1228,1158 L1240,1151.5" stroke="#555" stroke-width="1.8"/>
<text x="1244" y="1196.3" font-size="13" fill="#c2c2c2" text-anchor="middle" font-weight="normal"  textLength="63" lengthAdjust="spacingAndGlyphs">VIBRATOR</text>
<line x1="1315" y1="1237.3" x2="1332" y2="1237.3" stroke="#aaa" stroke-width="2.4" />
<rect x="1331.4" y="1223.3" width="182" height="31.6" fill="#c2c2c2" stroke="#dcdcdc" stroke-width="1.6" />
<rect x="1333.4" y="1232.78" width="178" height="12.639999999999873" fill="url(#shaftH)"/>
<path d="M1358.5,1233.78 Q1363.5,1225.3 1368.5,1226.3 Q1373.5,1227.3 1375.5,1232.78 Z" fill="#555"/>
<path d="M1361,1244.4199999999998 Q1356,1252.8999999999999 1351,1251.8999999999999 Q1346,1250.8999999999999 1344,1245.4199999999998 Z" fill="#555"/>
<path d="M1358,1245.4199999999998 L1361.5,1232.78" stroke="#3a3a3a" stroke-width="3" opacity="0.7"/>
<path d="M1389.5,1233.78 Q1394.5,1225.3 1399.5,1226.3 Q1404.5,1227.3 1406.5,1232.78 Z" fill="#555"/>
<path d="M1392,1244.4199999999998 Q1387,1252.8999999999999 1382,1251.8999999999999 Q1377,1250.8999999999999 1375,1245.4199999999998 Z" fill="#555"/>
<path d="M1389,1245.4199999999998 L1392.5,1232.78" stroke="#3a3a3a" stroke-width="3" opacity="0.7"/>
<path d="M1421.5,1233.78 Q1426.5,1225.3 1431.5,1226.3 Q1436.5,1227.3 1438.5,1232.78 Z" fill="#555"/>
<path d="M1424,1244.4199999999998 Q1419,1252.8999999999999 1414,1251.8999999999999 Q1409,1250.8999999999999 1407,1245.4199999999998 Z" fill="#555"/>
<path d="M1421,1245.4199999999998 L1424.5,1232.78" stroke="#3a3a3a" stroke-width="3" opacity="0.7"/>
<path d="M1452.5,1233.78 Q1457.5,1225.3 1462.5,1226.3 Q1467.5,1227.3 1469.5,1232.78 Z" fill="#555"/>
<path d="M1455,1244.4199999999998 Q1450,1252.8999999999999 1445,1251.8999999999999 Q1440,1250.8999999999999 1438,1245.4199999999998 Z" fill="#555"/>
<path d="M1452,1245.4199999999998 L1455.5,1232.78" stroke="#3a3a3a" stroke-width="3" opacity="0.7"/>
<path d="M1483.5,1233.78 Q1488.5,1225.3 1493.5,1226.3 Q1498.5,1227.3 1500.5,1232.78 Z" fill="#555"/>
<path d="M1486,1244.4199999999998 Q1481,1252.8999999999999 1476,1251.8999999999999 Q1471,1250.8999999999999 1469,1245.4199999999998 Z" fill="#555"/>
<path d="M1483,1245.4199999999998 L1486.5,1232.78" stroke="#3a3a3a" stroke-width="3" opacity="0.7"/>
<circle cx="1305.5" cy="1237.3" r="11" fill="#1cf224" stroke="#d8d8d8" stroke-width="2"/>
<line x1="1354.4" y1="1205.3" x2="1415.2" y2="1205.3" stroke="#d6d6d6" stroke-width="2.6" />
<path d="M1413.2,1197.3 L1423.2,1205.3 L1413.2,1213.3 Z" fill="#d6d6d6"/>
<text x="1500" y="1126.4" font-size="14.5" fill="#d6c26a" text-anchor="middle" font-weight="bold"  textLength="57.5" lengthAdjust="spacingAndGlyphs">M 1A08</text>
<line x1="1501" y1="1178" x2="1501" y2="1192" stroke="#c9c9c9" stroke-width="2.6" />
<line x1="1501" y1="1218" x2="1501" y2="1224" stroke="#c9c9c9" stroke-width="2.6" />
<circle cx="1501" cy="1159.5" r="18" fill="#1cf224" stroke="#c8f0c8" stroke-width="2"/>
<text x="1501" y="1165.5" font-size="16" fill="#1f6a1f" text-anchor="middle" font-weight="bold" >M</text>
<rect x="1456.5" y="1192" width="89.5" height="26.8" fill="none" stroke="#8a8c94" stroke-width="1.3" />
<text x="1528.0" y="1213.8" font-size="18" fill="#f3962c" text-anchor="end" font-weight="normal" >40 %</text>
<text x="1784" y="971.5" font-size="15" fill="#c2c2c2" text-anchor="middle" font-weight="bold"  textLength="111" lengthAdjust="spacingAndGlyphs">MSW  STORAGE</text>
<text x="1784" y="989.5" font-size="15" fill="#c2c2c2" text-anchor="middle" font-weight="bold"  textLength="77" lengthAdjust="spacingAndGlyphs">HOPPER 2</text>
<line x1="1783" y1="1162" x2="1783" y2="1224" stroke="#c9c9c9" stroke-width="2.6" />
<line x1="1708" y1="1149.6" x2="1750" y2="1149.6" stroke="#c9c9c9" stroke-width="2.6" />
<path d="M1734.2,1001.3 H1832.7 V1140 L1782.5,1162.5 L1734.2,1140 Z" fill="url(#msw)" stroke="#c9c9c9" stroke-width="4.5"/>
<rect x="1740.5" y="1007" width="32" height="33" fill="#ea3a3a" stroke="none" stroke-width="0" rx="3"/>
<path d="M1749.5,1017 L1763.5,1030 M1763.5,1017 L1749.5,1030" stroke="#fff" stroke-width="4" fill="none"/>
<circle cx="1832.3" cy="1028.3" r="11.5" fill="url(#gdot)" stroke="#e4e4e4" stroke-width="2"/>
<rect x="1740" y="1061" width="87" height="25" fill="#3f4148" stroke="#777" stroke-width="1" />
<text x="1807" y="1080" font-size="18" fill="#f3962c" text-anchor="end" font-weight="normal" >0 %</text>
<circle cx="1832.3" cy="1113.5" r="15.0" fill="none" stroke="#f5a01c" stroke-width="3"/>
<circle cx="1832.3" cy="1113.5" r="10.5" fill="#1cf224" stroke="#d8d8d8" stroke-width="2"/>
<text x="1680" y="1116" font-size="14.5" fill="#d6c26a" text-anchor="middle" font-weight="bold"  textLength="58" lengthAdjust="spacingAndGlyphs">M 1A18</text>
<circle cx="1682.8" cy="1149.6" r="23" fill="none" stroke="#f5a01c" stroke-width="4.5"/>
<circle cx="1682.8" cy="1149.6" r="19.5" fill="#c8c8c8" stroke="#e0e0e0" stroke-width="1.5"/><path d="M1668,1158 L1680,1151.5" stroke="#555" stroke-width="1.8"/>
<text x="1684" y="1196.3" font-size="13" fill="#c2c2c2" text-anchor="middle" font-weight="normal"  textLength="63" lengthAdjust="spacingAndGlyphs">VIBRATOR</text>
<line x1="1755" y1="1237.3" x2="1772" y2="1237.3" stroke="#aaa" stroke-width="2.4" />
<rect x="1771.4" y="1223.3" width="182" height="31.6" fill="#c2c2c2" stroke="#dcdcdc" stroke-width="1.6" />
<rect x="1773.4" y="1232.78" width="178" height="12.639999999999873" fill="url(#shaftH)"/>
<path d="M1798.5,1233.78 Q1803.5,1225.3 1808.5,1226.3 Q1813.5,1227.3 1815.5,1232.78 Z" fill="#555"/>
<path d="M1801,1244.4199999999998 Q1796,1252.8999999999999 1791,1251.8999999999999 Q1786,1250.8999999999999 1784,1245.4199999999998 Z" fill="#555"/>
<path d="M1798,1245.4199999999998 L1801.5,1232.78" stroke="#3a3a3a" stroke-width="3" opacity="0.7"/>
<path d="M1829.5,1233.78 Q1834.5,1225.3 1839.5,1226.3 Q1844.5,1227.3 1846.5,1232.78 Z" fill="#555"/>
<path d="M1832,1244.4199999999998 Q1827,1252.8999999999999 1822,1251.8999999999999 Q1817,1250.8999999999999 1815,1245.4199999999998 Z" fill="#555"/>
<path d="M1829,1245.4199999999998 L1832.5,1232.78" stroke="#3a3a3a" stroke-width="3" opacity="0.7"/>
<path d="M1861.5,1233.78 Q1866.5,1225.3 1871.5,1226.3 Q1876.5,1227.3 1878.5,1232.78 Z" fill="#555"/>
<path d="M1864,1244.4199999999998 Q1859,1252.8999999999999 1854,1251.8999999999999 Q1849,1250.8999999999999 1847,1245.4199999999998 Z" fill="#555"/>
<path d="M1861,1245.4199999999998 L1864.5,1232.78" stroke="#3a3a3a" stroke-width="3" opacity="0.7"/>
<path d="M1892.5,1233.78 Q1897.5,1225.3 1902.5,1226.3 Q1907.5,1227.3 1909.5,1232.78 Z" fill="#555"/>
<path d="M1895,1244.4199999999998 Q1890,1252.8999999999999 1885,1251.8999999999999 Q1880,1250.8999999999999 1878,1245.4199999999998 Z" fill="#555"/>
<path d="M1892,1245.4199999999998 L1895.5,1232.78" stroke="#3a3a3a" stroke-width="3" opacity="0.7"/>
<path d="M1923.5,1233.78 Q1928.5,1225.3 1933.5,1226.3 Q1938.5,1227.3 1940.5,1232.78 Z" fill="#555"/>
<path d="M1926,1244.4199999999998 Q1921,1252.8999999999999 1916,1251.8999999999999 Q1911,1250.8999999999999 1909,1245.4199999999998 Z" fill="#555"/>
<path d="M1923,1245.4199999999998 L1926.5,1232.78" stroke="#3a3a3a" stroke-width="3" opacity="0.7"/>
<circle cx="1745.5" cy="1237.3" r="11" fill="url(#gdot)" stroke="#e4e4e4" stroke-width="2"/>
<line x1="1794.4" y1="1205.3" x2="1855.2" y2="1205.3" stroke="#d6d6d6" stroke-width="2.6" />
<path d="M1853.2,1197.3 L1863.2,1205.3 L1853.2,1213.3 Z" fill="#d6d6d6"/>
<text x="1940" y="1126.4" font-size="14.5" fill="#d6c26a" text-anchor="middle" font-weight="bold"  textLength="57.5" lengthAdjust="spacingAndGlyphs">M 1A09</text>
<line x1="1941" y1="1178" x2="1941" y2="1192" stroke="#c9c9c9" stroke-width="2.6" />
<line x1="1941" y1="1218" x2="1941" y2="1224" stroke="#c9c9c9" stroke-width="2.6" />
<circle cx="1941" cy="1159.5" r="18" fill="#c8c8c8" stroke="#dcdcdc" stroke-width="2"/>
<text x="1941" y="1165.5" font-size="16" fill="#525252" text-anchor="middle" font-weight="bold" >M</text>
<rect x="1896.5" y="1192" width="89.5" height="26.8" fill="none" stroke="#8a8c94" stroke-width="1.3" />
<text x="1968.0" y="1213.8" font-size="18" fill="#f3962c" text-anchor="end" font-weight="normal" >0 %</text>
<line x1="1498" y1="1265" x2="1498" y2="1294" stroke="#d6d6d6" stroke-width="3" />
<path d="M1489,1291 L1498,1302 L1507,1291 Z" fill="#d6d6d6"/>
<line x1="1937" y1="1265" x2="1937" y2="1294" stroke="#d6d6d6" stroke-width="3" />
<path d="M1928,1291 L1937,1302 L1946,1291 Z" fill="#d6d6d6"/>
<line x1="1273" y1="1337" x2="1273" y2="1352" stroke="#aaa" stroke-width="2.2" />
<circle cx="1273" cy="1361" r="11.5" fill="#1cf224" stroke="#d8d8d8" stroke-width="2"/>
<line x1="1481" y1="1337" x2="1481" y2="1352" stroke="#aaa" stroke-width="2.2" />
<circle cx="1481" cy="1361" r="11.5" fill="url(#gdot)" stroke="#e4e4e4" stroke-width="2"/>
<line x1="1727" y1="1337" x2="1727" y2="1352" stroke="#aaa" stroke-width="2.2" />
<circle cx="1727" cy="1361" r="11.5" fill="url(#gdot)" stroke="#e4e4e4" stroke-width="2"/>
<line x1="1922" y1="1337" x2="1922" y2="1352" stroke="#aaa" stroke-width="2.2" />
<circle cx="1922" cy="1361" r="11.5" fill="url(#gdot)" stroke="#e4e4e4" stroke-width="2"/>
<path d="M2144,1350 L2202,1400" stroke="#262626" stroke-width="10"/>
<rect x="1272" y="1312.5" width="859" height="25.5" fill="url(#beltH)" stroke="none" stroke-width="1" />
<path d="M1661.5,1316.5 L1671,1325.3 L1661.5,1334 Z" fill="#0a3d0c" stroke="#22c822" stroke-width="1.3"/>
<path d="M1694.5,1316.5 L1704,1325.3 L1694.5,1334 Z" fill="#0a3d0c" stroke="#22c822" stroke-width="1.3"/>
<path d="M1726.5,1316.5 L1736,1325.3 L1726.5,1334 Z" fill="#0a3d0c" stroke="#22c822" stroke-width="1.3"/>
<rect x="2085.7" y="1292" width="79.5" height="63" fill="url(#dbox)" stroke="#2a2a2a" stroke-width="1" />
<rect x="2085.7" y="1312.5" width="45" height="25.5" fill="url(#beltH)" stroke="none" stroke-width="1" />
<circle cx="1272" cy="1325.3" r="12" fill="#464646" stroke="#2a2a2a" stroke-width="1.5"/>
<circle cx="2131" cy="1325.3" r="12.5" fill="#464646" stroke="#2a2a2a" stroke-width="1.5"/>
<text x="2130.5" y="1216.4" font-size="14.5" fill="#d6c26a" text-anchor="middle" font-weight="bold"  textLength="57" lengthAdjust="spacingAndGlyphs">M 1A10</text>
<line x1="2131" y1="1270" x2="2131" y2="1292" stroke="#c9c9c9" stroke-width="2.6" />
<circle cx="2131" cy="1251.4" r="18" fill="#1cf224" stroke="#c8f0c8" stroke-width="2"/>
<text x="2131" y="1257.4" font-size="16" fill="#1f6a1f" text-anchor="middle" font-weight="bold" >M</text>
<line x1="2169.8" y1="1384" x2="2169.8" y2="1410" stroke="#aaa" stroke-width="2.2" />
<circle cx="2169.8" cy="1419.6" r="11.5" fill="url(#gdot)" stroke="#e4e4e4" stroke-width="2"/>
<line x1="2222" y1="1445.3" x2="2236" y2="1445.3" stroke="#aaa" stroke-width="2.2" />
<circle cx="2244.5" cy="1445.3" r="11.5" fill="#1cf224" stroke="#d8d8d8" stroke-width="2"/>
<path d="M2280,1027 L2338,1066" stroke="#262626" stroke-width="10"/>
<rect x="2199.2" y="1008.5" width="23" height="437" fill="url(#beltV)" stroke="none" stroke-width="1" />
<path d="M2202,1188.2 L2210.5,1178.7 L2219,1188.2 Z" fill="#0a3d0c" stroke="#22c822" stroke-width="1.3"/>
<path d="M2202,1220.8 L2210.5,1211.3 L2219,1220.8 Z" fill="#0a3d0c" stroke="#22c822" stroke-width="1.3"/>
<path d="M2202,1253.6 L2210.5,1244.1 L2219,1253.6 Z" fill="#0a3d0c" stroke="#22c822" stroke-width="1.3"/>
<circle cx="2210.5" cy="1445.3" r="12.3" fill="#464646" stroke="#2a2a2a" stroke-width="1.5"/>
<rect x="2225.8" y="985" width="60" height="50" fill="url(#dbox)" stroke="#2a2a2a" stroke-width="1" />
<rect x="2210" y="996.5" width="46" height="24" fill="url(#beltH)" stroke="none" stroke-width="1" />
<circle cx="2210.5" cy="1008.5" r="12.3" fill="#464646" stroke="#2a2a2a" stroke-width="1.5"/>
<circle cx="2256.2" cy="1008.5" r="12.3" fill="#464646" stroke="#2a2a2a" stroke-width="1.5"/>
<text x="2251.5" y="910.5" font-size="14.5" fill="#d6c26a" text-anchor="middle" font-weight="bold"  textLength="56" lengthAdjust="spacingAndGlyphs">M 1A11</text>
<line x1="2254" y1="961" x2="2254" y2="985" stroke="#c9c9c9" stroke-width="2.6" />
<circle cx="2254" cy="943" r="18" fill="#1cf224" stroke="#c8f0c8" stroke-width="2"/>
<text x="2254" y="949" font-size="16" fill="#1f6a1f" text-anchor="middle" font-weight="bold" >M</text>
<line x1="2256.2" y1="1089" x2="2256.2" y2="1104" stroke="#aaa" stroke-width="2.2" />
<circle cx="2256.2" cy="1113.6" r="11.5" fill="#1cf224" stroke="#d8d8d8" stroke-width="2"/>
<line x1="2374" y1="1089" x2="2374" y2="1104" stroke="#aaa" stroke-width="2.2" />
<circle cx="2374" cy="1113.6" r="11.5" fill="url(#gdot)" stroke="#e4e4e4" stroke-width="2"/>
<line x1="2581" y1="1089" x2="2581" y2="1104" stroke="#aaa" stroke-width="2.2" />
<circle cx="2581" cy="1113.6" r="11.5" fill="url(#gdot)" stroke="#e4e4e4" stroke-width="2"/>
<line x1="2646" y1="1089" x2="2646" y2="1104" stroke="#aaa" stroke-width="2.2" />
<circle cx="2646" cy="1113.6" r="11.5" fill="url(#gdot)" stroke="#e4e4e4" stroke-width="2"/>
<rect x="2256" y="1064.5" width="463" height="25.5" fill="url(#beltH)" stroke="none" stroke-width="1" />
<path d="M2456.5,1068.5 L2466,1077.2 L2456.5,1086 Z" fill="#0a3d0c" stroke="#22c822" stroke-width="1.3"/>
<path d="M2489.5,1068.5 L2499,1077.2 L2489.5,1086 Z" fill="#0a3d0c" stroke="#22c822" stroke-width="1.3"/>
<path d="M2521.5,1068.5 L2531,1077.2 L2521.5,1086 Z" fill="#0a3d0c" stroke="#22c822" stroke-width="1.3"/>
<rect x="2677" y="1047.5" width="80" height="62.5" fill="url(#dbox)" stroke="#2a2a2a" stroke-width="1" />
<rect x="2677" y="1064.5" width="42" height="25.5" fill="url(#beltH)" stroke="none" stroke-width="1" />
<circle cx="2256.2" cy="1077.2" r="12" fill="#464646" stroke="#2a2a2a" stroke-width="1.5"/>
<circle cx="2719" cy="1077.2" r="12.5" fill="#464646" stroke="#2a2a2a" stroke-width="1.5"/>
<text x="2718" y="965" font-size="14.5" fill="#d6c26a" text-anchor="middle" font-weight="bold"  textLength="57" lengthAdjust="spacingAndGlyphs">M 1A12</text>
<line x1="2718" y1="1018" x2="2718" y2="1048" stroke="#c9c9c9" stroke-width="2.6" />
<circle cx="2718" cy="1000" r="18" fill="#1cf224" stroke="#c8f0c8" stroke-width="2"/>
<text x="2718" y="1006" font-size="16" fill="#1f6a1f" text-anchor="middle" font-weight="bold" >M</text>
<rect x="2754.5" y="980.5" width="412" height="41" fill="none" stroke="#5a5c64" stroke-width="1.5" />
<text x="2761.5" y="1007.2" font-size="18.5" fill="#cfcfcf" text-anchor="start" font-weight="normal"  textLength="325" lengthAdjust="spacingAndGlyphs">M1A12 interlocked with piston feeder</text>
<rect x="3131" y="985" width="33" height="33" fill="#ea3a3a" stroke="none" stroke-width="0" rx="2"/>
<path d="M3140,994 L3155,1009 M3155,994 L3140,1009" stroke="#fff" stroke-width="3.6"/>
<rect x="2412" y="1104" width="143" height="53" fill="#26272c"/>
<rect x="2410" y="1102" width="143" height="27" fill="#5b5d65" stroke="none" stroke-width="1" />
<rect x="2410" y="1129" width="143" height="26" fill="#3f4148" stroke="none" stroke-width="1" />
<text x="2481.5" y="1123" font-size="18" fill="#cfcfcf" text-anchor="middle" font-weight="normal" >WT 701</text>
<text x="2504" y="1151" font-size="23" fill="#f3962c" text-anchor="end" font-weight="normal" >0</text>
<text x="2505.5" y="1151" font-size="16" fill="#f3962c" text-anchor="start" font-weight="normal"  textLength="34.5" lengthAdjust="spacingAndGlyphs">kg/h</text>
<circle cx="2451" cy="1174.5" r="11" fill="#f01818" stroke="#d8d8d8" stroke-width="2"/>
<circle cx="2484" cy="1174.5" r="11" fill="#1cf224" stroke="#d8d8d8" stroke-width="2"/>
<circle cx="2516.5" cy="1174.5" r="11" fill="#1cf224" stroke="#d8d8d8" stroke-width="2"/>
<g stroke="#c9c9c9" stroke-width="2.6" fill="none"><polyline points="2697,1148 2662,1211 2662,1344 2954,1344"/><polyline points="2735,1148 2772,1213 2772,1246 2954,1246"/></g>
<g stroke="#d8d8d8" stroke-width="2" fill="none"><path d="M2693,1110 L2720,1132 L2708,1150 L2685,1143 Z"/><path d="M2741,1110 L2714,1132 L2727,1150 L2748,1143 Z"/></g>
<line x1="2716" y1="1117" x2="2800" y2="1117" stroke="#c9c9c9" stroke-width="2.6" />
<path d="M2752,1147 L2782,1203" stroke="#1db41d" stroke-width="2.6"/><path d="M2776,1206 L2788,1213 L2788,1199 Z" fill="#1db41d"/>
<text x="2817" y="1082" font-size="14.5" fill="#d6c26a" text-anchor="middle" font-weight="bold"  textLength="57" lengthAdjust="spacingAndGlyphs">M 1A19</text>
<circle cx="2817" cy="1117" r="18" fill="#1cf224" stroke="#c8f0c8" stroke-width="2"/>
<text x="2817" y="1123" font-size="16" fill="#1f6a1f" text-anchor="middle" font-weight="bold" >M</text>
<rect x="2863" y="1069.5" width="303" height="96" fill="none" stroke="#5a5c64" stroke-width="1.5" />
<rect x="2865" y="1071" width="299" height="34" fill="#6a6a6a" stroke="none" stroke-width="1" />
<text x="3014" y="1095" font-size="18.5" fill="#e2e2e2" text-anchor="middle" font-weight="bold"  textLength="92" lengthAdjust="spacingAndGlyphs">FLAP GATE</text>
<circle cx="3144" cy="1087.5" r="13.5" fill="#f56a10"/><path d="M3135.5,1091 Q3144,1078 3152.5,1091" stroke="#fff" stroke-width="2.2" fill="none"/><path d="M3139,1089 Q3144,1085 3148,1090" stroke="#fff" stroke-width="1.6" fill="none"/>
<text x="2870" y="1127" font-size="17" fill="#cfcfcf" text-anchor="start" font-weight="normal"  textLength="74" lengthAdjust="spacingAndGlyphs">Direction:</text>
<text x="2955" y="1127" font-size="15.5" fill="#cfcfcf" text-anchor="start" font-weight="normal"  textLength="69" lengthAdjust="spacingAndGlyphs">STOPPED</text>
<path d="M2954,1224.5 H3149 L3166,1245.5 L3149,1266 H2954 Z" fill="url(#feed)" stroke="#d8d8d8" stroke-width="2"/>
<text x="3145" y="1251" font-size="13" fill="#e0e0e0" text-anchor="end" font-weight="normal"  textLength="102" lengthAdjust="spacingAndGlyphs">SCREW FEEDER</text>
<path d="M2954,1322.5 H3149 L3166,1343.5 L3149,1364 H2954 Z" fill="url(#feed)" stroke="#d8d8d8" stroke-width="2"/>
<text x="3145" y="1349" font-size="13" fill="#e0e0e0" text-anchor="end" font-weight="normal"  textLength="102" lengthAdjust="spacingAndGlyphs">PISTON FEEDER</text>
</svg></div></body></html>
